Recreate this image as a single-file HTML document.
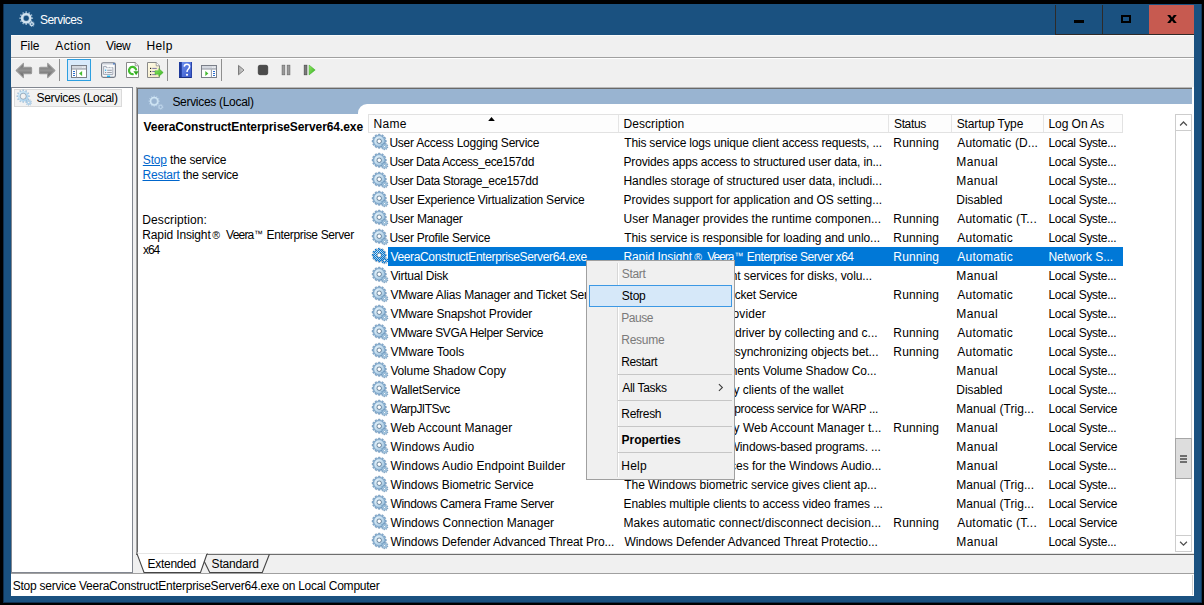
<!DOCTYPE html><html><head><meta charset="utf-8"><title>Services</title><style>
html,body{margin:0;padding:0;}
body{width:1204px;height:605px;background:#000;position:relative;overflow:hidden;font-family:"Liberation Sans", sans-serif;font-size:12px;color:#000;}
div,span,svg{position:absolute;box-sizing:border-box;}
.t{white-space:pre;line-height:16px;height:16px;}
.t span{position:static;}
.lnk{color:#0066cc;text-decoration:underline;}
.ico{overflow:visible;}
#win{left:3px;top:4px;width:1199px;height:599px;background:#1a5180;}
#client{left:11px;top:35px;width:1183px;height:561px;background:#f0f0f0;}
.vsep{width:1px;background:#a0a0a0;}
.hl{height:1px;}
.colsep{width:1px;background:#e5e5e5;top:115px;height:17px;}
.msep{left:618px;width:114px;height:1px;background:#c6c6c6;}
</style></head><body>
<svg width="0" height="0"><defs><linearGradient id="gg" x1="0" y1="0" x2="1" y2="1"><stop offset="0" stop-color="#e2f1fa"/><stop offset="1" stop-color="#a3c6e0"/></linearGradient><linearGradient id="gt" x1="0" y1="0" x2="1" y2="1"><stop offset="0" stop-color="#d3ecfa"/><stop offset="1" stop-color="#a9d0ec"/></linearGradient><pattern id="chk" width="2" height="2" patternUnits="userSpaceOnUse"><rect x="0" y="0" width="1" height="1" fill="#0078d7"/><rect x="1" y="1" width="1" height="1" fill="#0078d7"/></pattern></defs></svg>
<div id="win"></div>
<div id="edgeL" style="left:3px;top:4px;width:1px;height:599px;background:#0f3050"></div>
<div id="edgeR" style="left:1201px;top:4px;width:1px;height:599px;background:#113759"></div>
<div id="edgeB" style="left:3px;top:602px;width:1199px;height:1px;background:#0f3050"></div>
<!-- title bar buttons -->
<div style="left:1055px;top:5px;width:1px;height:30px;background:#2e2a28"></div>
<div style="left:1102px;top:5px;width:1px;height:30px;background:#2e2a28"></div>
<div style="left:1149px;top:5px;width:45px;height:29px;background:#c75a50"></div>
<div style="left:1055px;top:34px;width:139px;height:1px;background:#2e2a28"></div>
<div style="left:1074px;top:20px;width:10px;height:3px;background:#000"></div>
<div style="left:1121px;top:15px;width:10px;height:8px;border:2px solid #000"></div>
<svg style="left:1167px;top:15px" width="10" height="8" viewBox="0 0 10 8"><path d="M0.2 0H3.2L5 2.6 6.8 0H9.8L6.6 4 9.8 8H6.8L5 5.4 3.2 8H0.2L3.4 4Z" fill="#000"/></svg>
<!-- client -->
<div id="client"></div>
<div class="hl" style="left:11px;top:35px;width:1183px;background:#fafafa"></div>
<div class="hl" style="left:11px;top:57px;width:1183px;background:#a0a0a0"></div>
<div class="hl" style="left:11px;top:58px;width:1183px;background:#ffffff"></div>
<!-- toolbar -->
<svg id="tbsvg" style="left:11px;top:58px" width="320" height="29" viewBox="11 58 320 29">
<defs>
<linearGradient id="ga" x1="0" y1="0" x2="0" y2="1"><stop offset="0" stop-color="#6c6c6c"/><stop offset="0.5" stop-color="#939393"/><stop offset="1" stop-color="#5a5a5a"/></linearGradient>
<linearGradient id="gp" x1="0" y1="0" x2="1" y2="0"><stop offset="0" stop-color="#a4a4a4"/><stop offset="1" stop-color="#dcdcdc"/></linearGradient>
<linearGradient id="ggr" x1="0" y1="0" x2="1" y2="1"><stop offset="0" stop-color="#93e664"/><stop offset="1" stop-color="#33b021"/></linearGradient>
<linearGradient id="gh" x1="0" y1="0" x2="1" y2="1"><stop offset="0" stop-color="#7396f2"/><stop offset="1" stop-color="#3554c6"/></linearGradient>
<linearGradient id="gcream" x1="0" y1="0" x2="1" y2="1"><stop offset="0" stop-color="#fffbe8"/><stop offset="1" stop-color="#f3e9c0"/></linearGradient>
</defs>
<!-- back / forward -->
<path d="M16.2 70.5L23.4 63.4V67.2H30.6Q31.6 67.2 31.6 68.2V72.8Q31.6 73.8 30.6 73.8H23.4V77.6Z" fill="url(#ga)" stroke="#9a9a9a" stroke-width="1.1" stroke-linejoin="round"/>
<path d="M54.9 70.5L47.7 63.4V67.2H40.5Q39.5 67.2 39.5 68.2V72.8Q39.5 73.8 40.5 73.8H47.7V77.6Z" fill="url(#ga)" stroke="#9a9a9a" stroke-width="1.1" stroke-linejoin="round"/>
<rect x="59" y="59" width="1" height="22" fill="#8e8e8e"/>
<!-- selected button -->
<rect x="67.5" y="59.5" width="23" height="21" fill="#d9eafb" stroke="#2d9fe0" stroke-width="1"/>
<g>
<rect x="71.5" y="65.5" width="15" height="12" fill="#fff" stroke="#7b7f88" stroke-width="1"/>
<rect x="72" y="66" width="14" height="3" fill="#d4d8df"/>
<rect x="72" y="68.6" width="14" height="0.9" fill="#8a8f99"/>
<rect x="76" y="69.5" width="0.9" height="8" fill="#8a8f99"/>
<rect x="82.3" y="66.6" width="1.1" height="1.1" fill="#fff"/><rect x="84.2" y="66.6" width="1.1" height="1.1" fill="#fff"/>
<rect x="73" y="71" width="2" height="1" fill="#2b6fd0"/><rect x="73" y="73" width="2" height="1" fill="#2b6fd0"/><rect x="73" y="75" width="2" height="1" fill="#2b6fd0"/>
<path d="M82.1 70.9V76.1L79 73.5Z" fill="#46bb32"/>
</g>
<!-- properties -->
<g>
<rect x="101.6" y="62.8" width="13.8" height="14.6" rx="1.8" fill="#fff" stroke="#767c88" stroke-width="1.2"/>
<rect x="102.3" y="63.6" width="12.4" height="1.6" fill="#dfe3ea"/>
<rect x="113.2" y="63" width="1.6" height="1.6" fill="#4a78c0"/>
<path d="M103.6 66.4H106.2V67.4H112.9V74.6H103.6Z" fill="#eef1f6" stroke="#a3a9b6" stroke-width="1"/>
<rect x="107" y="66.4" width="2.2" height="1" fill="#fff"/><rect x="110" y="66.4" width="2.2" height="1" fill="#fff"/>
<rect x="105" y="69.6" width="1.2" height="1.2" fill="#19b4f0"/><rect x="107.2" y="69.8" width="4.6" height="0.9" fill="#8f949e"/>
<rect x="105" y="72" width="1.2" height="1.1" fill="#8f949e"/><rect x="107.2" y="72.1" width="4.6" height="0.9" fill="#8f949e"/>
<rect x="107" y="75.6" width="3.2" height="1.4" fill="#19b4f0"/><rect x="111" y="75.8" width="2.6" height="1" fill="#c8ccd4"/>
</g>
<!-- refresh -->
<g>
<path d="M126.5 62.5H135.2L138.5 65.8V77.5H126.5Z" fill="#fff" stroke="#8a8a8a" stroke-width="1"/>
<path d="M135.2 62.5V65.8H138.5" fill="#e8e8e8" stroke="#8a8a8a" stroke-width="0.8"/>
<path d="M136.2 70.4A3.6 3.6 0 1 0 133.6 74" fill="none" stroke="#43bd2e" stroke-width="2.2"/>
<path d="M133.4 71.2H138.6L136.2 75.2Z" fill="#2fa81c"/>
</g>
<!-- export -->
<g>
<path d="M147.5 62.5H156.2L159.5 65.8V77.5H147.5Z" fill="url(#gcream)" stroke="#8a8a8a" stroke-width="1"/>
<path d="M156.2 62.5V65.8H159.5" fill="#fff" stroke="#8a8a8a" stroke-width="0.8"/>
<rect x="150" y="67.8" width="1.2" height="1.2" fill="#222"/><rect x="152.2" y="67.9" width="4.6" height="1" fill="#7d78a8"/>
<rect x="150" y="70.9" width="1.2" height="1.2" fill="#222"/><rect x="152.2" y="71" width="3.4" height="1" fill="#7d78a8"/>
<rect x="150" y="74" width="1.2" height="1.2" fill="#222"/><rect x="152.2" y="74.1" width="4" height="1" fill="#7d78a8"/>
<path d="M155 70.8H158.8V68.6L163.2 72.5 158.8 76.4V74.2H155Z" fill="url(#ggr)" stroke="#3cae28" stroke-width="0.5"/>
</g>
<rect x="167" y="59" width="1" height="22" fill="#8e8e8e"/>
<!-- help -->
<g>
<rect x="179" y="62" width="13" height="16" fill="url(#gh)"/>
<rect x="179" y="62" width="2.8" height="16" fill="#1e3a9c"/>
<rect x="179" y="77" width="13" height="1" fill="#1a2f80"/>
<rect x="191" y="62" width="1" height="16" fill="#2a44a8"/>
<path d="M184.2 66.6Q184.4 64.2 186.9 64.2 189.6 64.2 189.6 66.6 189.6 68 188.2 69.2 187 70.2 187 72" fill="none" stroke="#fff" stroke-width="1.5"/>
<circle cx="187" cy="74.8" r="1.1" fill="#fff"/>
</g>
<!-- action pane -->
<g>
<rect x="201.5" y="65.5" width="15" height="12" fill="#fff" stroke="#7b7f88" stroke-width="1"/>
<rect x="202" y="66" width="14" height="3" fill="#d4d8df"/>
<rect x="202" y="68.6" width="14" height="0.9" fill="#8a8f99"/>
<rect x="210.9" y="69.5" width="0.9" height="8" fill="#8a8f99"/>
<rect x="212.3" y="66.6" width="1.1" height="1.1" fill="#fff"/><rect x="214.2" y="66.6" width="1.1" height="1.1" fill="#fff"/>
<rect x="213" y="71" width="2" height="1" fill="#2b6fd0"/><rect x="213" y="73" width="2" height="1" fill="#2b6fd0"/><rect x="213" y="75" width="2" height="1" fill="#2b6fd0"/>
<path d="M205.3 70.9V76.1L208.4 73.5Z" fill="#46bb32"/>
</g>
<rect x="221" y="59" width="1" height="22" fill="#8e8e8e"/>
<!-- play -->
<path d="M238.5 65.4L244 70.1 238.5 74.8Z" fill="url(#gp)" stroke="#7c7c7c" stroke-width="1" stroke-linejoin="round"/>
<!-- stop -->
<rect x="258.3" y="65.3" width="9.4" height="9.4" rx="1.6" fill="#4b4b4b" stroke="#3a3a3a" stroke-width="0.8"/>
<!-- pause -->
<rect x="282.1" y="65.2" width="2.7" height="9.6" fill="#9a9a9a" stroke="#6c6c6c" stroke-width="0.7"/>
<rect x="287.2" y="65.2" width="2.7" height="9.6" fill="#9a9a9a" stroke="#6c6c6c" stroke-width="0.7"/>
<!-- restart -->
<rect x="304.2" y="65.2" width="2.7" height="9.6" fill="#7a7a7a" stroke="#4c4c4c" stroke-width="0.7"/>
<path d="M309.1 65.1L315.2 70 309.1 74.9Z" fill="url(#ggr)" stroke="#38b024" stroke-width="0.5"/>
</svg>

<!-- tree pane -->
<div style="left:11px;top:87px;width:122px;height:486px;background:#fff;border:1px solid #828790;"></div>
<div style="left:14px;top:89px;width:108px;height:18px;background:#f2f2f2;border:1px solid #dadada"></div>
<!-- right pane -->
<div style="left:136px;top:87px;width:1058px;height:486px;background:#f0f0f0"></div>
<div style="left:136px;top:87px;width:1058px;height:468px;background:#fff;border-left:2px solid #696969;border-top:2px solid #696969;border-bottom:1px solid #6e6e6e"></div>
<div class="hl" style="left:136px;top:87px;width:1058px;background:#b9b9b9"></div>
<div style="left:136px;top:87px;width:1px;height:466px;background:#a0a0a0"></div>
<div style="left:136px;top:553px;width:2px;height:1px;background:#f0f0f0"></div>
<div style="left:1192px;top:87px;width:2px;height:467px;background:#fff"></div>
<div class="hl" style="left:138px;top:553px;width:1056px;background:#e3e3e3"></div>
<div style="left:138px;top:89px;width:1054px;height:25px;background:#99b4d1"></div>
<div style="left:358px;top:104px;width:836px;height:12px;background:#fff;border-top-left-radius:9px"></div>
<!-- list header -->
<div style="left:368px;top:114px;width:755px;height:19px;background:#fdfdfd;border:1px solid #e2e2e2;"></div>
<div class="colsep" style="left:618px"></div>
<div class="colsep" style="left:888px"></div>
<div class="colsep" style="left:951px"></div>
<div class="colsep" style="left:1043px"></div>
<svg style="left:488px;top:117px" width="7" height="4" viewBox="0 0 7 4"><path d="M0 4.2L3.5 0 7 4.2Z" fill="#000"/></svg>
<!-- selected row -->
<div style="left:388px;top:247px;width:735px;height:19px;background:#0078d7"></div>
<!-- scrollbar -->
<div style="left:1175px;top:114px;width:17px;height:438px;background:#fff;border-left:1px solid #cdcdcd;border-right:1px solid #cdcdcd"></div>
<div style="left:1175px;top:114px;width:17px;height:17px;border:1px solid #cdcdcd;background:#fff"></div>
<div style="left:1175px;top:535px;width:17px;height:17px;border:1px solid #cdcdcd;background:#fff"></div>
<svg style="left:1179px;top:120px" width="9" height="7" viewBox="0 0 9 7"><path d="M1.1 5.5L4.5 2 7.9 5.5" fill="none" stroke="#505050" stroke-width="1.25"/></svg>
<svg style="left:1179px;top:540px" width="9" height="7" viewBox="0 0 9 7"><path d="M1.1 1.7L4.5 5.2 7.9 1.7" fill="none" stroke="#505050" stroke-width="1.25"/></svg>
<div style="left:1175px;top:438px;width:17px;height:41px;background:#dddddd;border:1px solid #a6a6a6"></div>
<div style="left:1180px;top:455px;width:7px;height:2px;background:#6e6e6e"></div>
<div style="left:1180px;top:458px;width:7px;height:2px;background:#6e6e6e"></div>
<div style="left:1180px;top:461px;width:7px;height:2px;background:#6e6e6e"></div>
<!-- tabs -->
<svg style="left:130px;top:550px" width="150" height="25" viewBox="130 550 150 25">
<path d="M136.6 552.6L144 572.5H200.5L207.2 553.2" fill="#fff" stroke="#444" stroke-width="1.1"/>
<rect x="138" y="553" width="68.8" height="1" fill="#e6e6e6"/>
<path d="M204.3 561.5L209.7 572.5H262.3L269.4 554.3" fill="none" stroke="#444" stroke-width="1.1"/>
</svg>
<!-- status bar -->
<div class="hl" style="left:11px;top:573px;width:1183px;background:#a0a0a0"></div>
<div style="left:11px;top:574px;width:1183px;height:22px;background:#fff"></div>
<div style="left:1192px;top:575px;width:1px;height:20px;background:#d0d0d0"></div>

<div id="icons" style="left:0;top:0"><svg class="ico" style="left:371.8px;top:133.7px" width="16" height="16" viewBox="0 0 16 16"><path d="M13.00 6.11 L14.25 6.33 L14.25 8.07 L13.00 8.29 L12.77 9.15 L13.74 9.97 L12.87 11.48 L11.68 11.04 L11.04 11.68 L11.48 12.87 L9.97 13.74 L9.15 12.77 L8.29 13.00 L8.07 14.25 L6.33 14.25 L6.11 13.00 L5.25 12.77 L4.43 13.74 L2.92 12.87 L3.36 11.68 L2.72 11.04 L1.53 11.48 L0.66 9.97 L1.63 9.15 L1.40 8.29 L0.15 8.07 L0.15 6.33 L1.40 6.11 L1.63 5.25 L0.66 4.43 L1.53 2.92 L2.72 3.36 L3.36 2.72 L2.92 1.53 L4.43 0.66 L5.25 1.63 L6.11 1.40 L6.33 0.15 L8.07 0.15 L8.29 1.40 L9.15 1.63 L9.97 0.66 L11.48 1.53 L11.04 2.72 L11.68 3.36 L12.87 2.92 L13.74 4.43 L12.77 5.25 Z M9.50 7.20 A2.30 2.30 0 1 0 4.90 7.20 A2.30 2.30 0 1 0 9.50 7.20 Z" fill="#8db3d3" fill-opacity="1" fill-rule="evenodd" stroke="#4e7ba6" stroke-width="0.55" stroke-opacity="0.85"/><circle cx="7.2" cy="7.2" r="3.60" fill="none" stroke="url(#gg)" stroke-width="2.60"/><circle cx="7.2" cy="7.2" r="2.30" fill="none" stroke="#44596e" stroke-width="0.6" stroke-opacity="0.85"/><path d="M14.69 12.65 L15.96 13.02 L15.67 13.97 L14.41 13.56 L14.11 13.96 L14.84 15.06 L14.01 15.60 L13.30 14.48 L12.82 14.59 L12.67 15.90 L11.69 15.77 L11.87 14.47 L11.43 14.24 L10.47 15.15 L9.79 14.42 L10.77 13.54 L10.58 13.08 L9.26 13.16 L9.22 12.17 L10.53 12.12 L10.68 11.65 L9.62 10.86 L10.22 10.07 L11.26 10.88 L11.68 10.61 L11.37 9.33 L12.34 9.11 L12.61 10.40 L13.11 10.46 L13.70 9.28 L14.58 9.74 L13.96 10.90 L14.30 11.27 L15.51 10.74 L15.89 11.65 L14.67 12.15 Z M13.60 12.50 A1.00 1.00 0 1 0 11.60 12.50 A1.00 1.00 0 1 0 13.60 12.50 Z" fill="#8db3d3" fill-opacity="1" fill-rule="evenodd" stroke="#4e7ba6" stroke-width="0.45" stroke-opacity="0.85"/><circle cx="12.6" cy="12.5" r="1.65" fill="none" stroke="#a7c8e0" stroke-width="1.30"/></svg><svg class="ico" style="left:371.8px;top:152.7px" width="16" height="16" viewBox="0 0 16 16"><path d="M13.00 6.11 L14.25 6.33 L14.25 8.07 L13.00 8.29 L12.77 9.15 L13.74 9.97 L12.87 11.48 L11.68 11.04 L11.04 11.68 L11.48 12.87 L9.97 13.74 L9.15 12.77 L8.29 13.00 L8.07 14.25 L6.33 14.25 L6.11 13.00 L5.25 12.77 L4.43 13.74 L2.92 12.87 L3.36 11.68 L2.72 11.04 L1.53 11.48 L0.66 9.97 L1.63 9.15 L1.40 8.29 L0.15 8.07 L0.15 6.33 L1.40 6.11 L1.63 5.25 L0.66 4.43 L1.53 2.92 L2.72 3.36 L3.36 2.72 L2.92 1.53 L4.43 0.66 L5.25 1.63 L6.11 1.40 L6.33 0.15 L8.07 0.15 L8.29 1.40 L9.15 1.63 L9.97 0.66 L11.48 1.53 L11.04 2.72 L11.68 3.36 L12.87 2.92 L13.74 4.43 L12.77 5.25 Z M9.50 7.20 A2.30 2.30 0 1 0 4.90 7.20 A2.30 2.30 0 1 0 9.50 7.20 Z" fill="#8db3d3" fill-opacity="1" fill-rule="evenodd" stroke="#4e7ba6" stroke-width="0.55" stroke-opacity="0.85"/><circle cx="7.2" cy="7.2" r="3.60" fill="none" stroke="url(#gg)" stroke-width="2.60"/><circle cx="7.2" cy="7.2" r="2.30" fill="none" stroke="#44596e" stroke-width="0.6" stroke-opacity="0.85"/><path d="M14.69 12.65 L15.96 13.02 L15.67 13.97 L14.41 13.56 L14.11 13.96 L14.84 15.06 L14.01 15.60 L13.30 14.48 L12.82 14.59 L12.67 15.90 L11.69 15.77 L11.87 14.47 L11.43 14.24 L10.47 15.15 L9.79 14.42 L10.77 13.54 L10.58 13.08 L9.26 13.16 L9.22 12.17 L10.53 12.12 L10.68 11.65 L9.62 10.86 L10.22 10.07 L11.26 10.88 L11.68 10.61 L11.37 9.33 L12.34 9.11 L12.61 10.40 L13.11 10.46 L13.70 9.28 L14.58 9.74 L13.96 10.90 L14.30 11.27 L15.51 10.74 L15.89 11.65 L14.67 12.15 Z M13.60 12.50 A1.00 1.00 0 1 0 11.60 12.50 A1.00 1.00 0 1 0 13.60 12.50 Z" fill="#8db3d3" fill-opacity="1" fill-rule="evenodd" stroke="#4e7ba6" stroke-width="0.45" stroke-opacity="0.85"/><circle cx="12.6" cy="12.5" r="1.65" fill="none" stroke="#a7c8e0" stroke-width="1.30"/></svg><svg class="ico" style="left:371.8px;top:171.7px" width="16" height="16" viewBox="0 0 16 16"><path d="M13.00 6.11 L14.25 6.33 L14.25 8.07 L13.00 8.29 L12.77 9.15 L13.74 9.97 L12.87 11.48 L11.68 11.04 L11.04 11.68 L11.48 12.87 L9.97 13.74 L9.15 12.77 L8.29 13.00 L8.07 14.25 L6.33 14.25 L6.11 13.00 L5.25 12.77 L4.43 13.74 L2.92 12.87 L3.36 11.68 L2.72 11.04 L1.53 11.48 L0.66 9.97 L1.63 9.15 L1.40 8.29 L0.15 8.07 L0.15 6.33 L1.40 6.11 L1.63 5.25 L0.66 4.43 L1.53 2.92 L2.72 3.36 L3.36 2.72 L2.92 1.53 L4.43 0.66 L5.25 1.63 L6.11 1.40 L6.33 0.15 L8.07 0.15 L8.29 1.40 L9.15 1.63 L9.97 0.66 L11.48 1.53 L11.04 2.72 L11.68 3.36 L12.87 2.92 L13.74 4.43 L12.77 5.25 Z M9.50 7.20 A2.30 2.30 0 1 0 4.90 7.20 A2.30 2.30 0 1 0 9.50 7.20 Z" fill="#8db3d3" fill-opacity="1" fill-rule="evenodd" stroke="#4e7ba6" stroke-width="0.55" stroke-opacity="0.85"/><circle cx="7.2" cy="7.2" r="3.60" fill="none" stroke="url(#gg)" stroke-width="2.60"/><circle cx="7.2" cy="7.2" r="2.30" fill="none" stroke="#44596e" stroke-width="0.6" stroke-opacity="0.85"/><path d="M14.69 12.65 L15.96 13.02 L15.67 13.97 L14.41 13.56 L14.11 13.96 L14.84 15.06 L14.01 15.60 L13.30 14.48 L12.82 14.59 L12.67 15.90 L11.69 15.77 L11.87 14.47 L11.43 14.24 L10.47 15.15 L9.79 14.42 L10.77 13.54 L10.58 13.08 L9.26 13.16 L9.22 12.17 L10.53 12.12 L10.68 11.65 L9.62 10.86 L10.22 10.07 L11.26 10.88 L11.68 10.61 L11.37 9.33 L12.34 9.11 L12.61 10.40 L13.11 10.46 L13.70 9.28 L14.58 9.74 L13.96 10.90 L14.30 11.27 L15.51 10.74 L15.89 11.65 L14.67 12.15 Z M13.60 12.50 A1.00 1.00 0 1 0 11.60 12.50 A1.00 1.00 0 1 0 13.60 12.50 Z" fill="#8db3d3" fill-opacity="1" fill-rule="evenodd" stroke="#4e7ba6" stroke-width="0.45" stroke-opacity="0.85"/><circle cx="12.6" cy="12.5" r="1.65" fill="none" stroke="#a7c8e0" stroke-width="1.30"/></svg><svg class="ico" style="left:371.8px;top:190.7px" width="16" height="16" viewBox="0 0 16 16"><path d="M13.00 6.11 L14.25 6.33 L14.25 8.07 L13.00 8.29 L12.77 9.15 L13.74 9.97 L12.87 11.48 L11.68 11.04 L11.04 11.68 L11.48 12.87 L9.97 13.74 L9.15 12.77 L8.29 13.00 L8.07 14.25 L6.33 14.25 L6.11 13.00 L5.25 12.77 L4.43 13.74 L2.92 12.87 L3.36 11.68 L2.72 11.04 L1.53 11.48 L0.66 9.97 L1.63 9.15 L1.40 8.29 L0.15 8.07 L0.15 6.33 L1.40 6.11 L1.63 5.25 L0.66 4.43 L1.53 2.92 L2.72 3.36 L3.36 2.72 L2.92 1.53 L4.43 0.66 L5.25 1.63 L6.11 1.40 L6.33 0.15 L8.07 0.15 L8.29 1.40 L9.15 1.63 L9.97 0.66 L11.48 1.53 L11.04 2.72 L11.68 3.36 L12.87 2.92 L13.74 4.43 L12.77 5.25 Z M9.50 7.20 A2.30 2.30 0 1 0 4.90 7.20 A2.30 2.30 0 1 0 9.50 7.20 Z" fill="#8db3d3" fill-opacity="1" fill-rule="evenodd" stroke="#4e7ba6" stroke-width="0.55" stroke-opacity="0.85"/><circle cx="7.2" cy="7.2" r="3.60" fill="none" stroke="url(#gg)" stroke-width="2.60"/><circle cx="7.2" cy="7.2" r="2.30" fill="none" stroke="#44596e" stroke-width="0.6" stroke-opacity="0.85"/><path d="M14.69 12.65 L15.96 13.02 L15.67 13.97 L14.41 13.56 L14.11 13.96 L14.84 15.06 L14.01 15.60 L13.30 14.48 L12.82 14.59 L12.67 15.90 L11.69 15.77 L11.87 14.47 L11.43 14.24 L10.47 15.15 L9.79 14.42 L10.77 13.54 L10.58 13.08 L9.26 13.16 L9.22 12.17 L10.53 12.12 L10.68 11.65 L9.62 10.86 L10.22 10.07 L11.26 10.88 L11.68 10.61 L11.37 9.33 L12.34 9.11 L12.61 10.40 L13.11 10.46 L13.70 9.28 L14.58 9.74 L13.96 10.90 L14.30 11.27 L15.51 10.74 L15.89 11.65 L14.67 12.15 Z M13.60 12.50 A1.00 1.00 0 1 0 11.60 12.50 A1.00 1.00 0 1 0 13.60 12.50 Z" fill="#8db3d3" fill-opacity="1" fill-rule="evenodd" stroke="#4e7ba6" stroke-width="0.45" stroke-opacity="0.85"/><circle cx="12.6" cy="12.5" r="1.65" fill="none" stroke="#a7c8e0" stroke-width="1.30"/></svg><svg class="ico" style="left:371.8px;top:209.7px" width="16" height="16" viewBox="0 0 16 16"><path d="M13.00 6.11 L14.25 6.33 L14.25 8.07 L13.00 8.29 L12.77 9.15 L13.74 9.97 L12.87 11.48 L11.68 11.04 L11.04 11.68 L11.48 12.87 L9.97 13.74 L9.15 12.77 L8.29 13.00 L8.07 14.25 L6.33 14.25 L6.11 13.00 L5.25 12.77 L4.43 13.74 L2.92 12.87 L3.36 11.68 L2.72 11.04 L1.53 11.48 L0.66 9.97 L1.63 9.15 L1.40 8.29 L0.15 8.07 L0.15 6.33 L1.40 6.11 L1.63 5.25 L0.66 4.43 L1.53 2.92 L2.72 3.36 L3.36 2.72 L2.92 1.53 L4.43 0.66 L5.25 1.63 L6.11 1.40 L6.33 0.15 L8.07 0.15 L8.29 1.40 L9.15 1.63 L9.97 0.66 L11.48 1.53 L11.04 2.72 L11.68 3.36 L12.87 2.92 L13.74 4.43 L12.77 5.25 Z M9.50 7.20 A2.30 2.30 0 1 0 4.90 7.20 A2.30 2.30 0 1 0 9.50 7.20 Z" fill="#8db3d3" fill-opacity="1" fill-rule="evenodd" stroke="#4e7ba6" stroke-width="0.55" stroke-opacity="0.85"/><circle cx="7.2" cy="7.2" r="3.60" fill="none" stroke="url(#gg)" stroke-width="2.60"/><circle cx="7.2" cy="7.2" r="2.30" fill="none" stroke="#44596e" stroke-width="0.6" stroke-opacity="0.85"/><path d="M14.69 12.65 L15.96 13.02 L15.67 13.97 L14.41 13.56 L14.11 13.96 L14.84 15.06 L14.01 15.60 L13.30 14.48 L12.82 14.59 L12.67 15.90 L11.69 15.77 L11.87 14.47 L11.43 14.24 L10.47 15.15 L9.79 14.42 L10.77 13.54 L10.58 13.08 L9.26 13.16 L9.22 12.17 L10.53 12.12 L10.68 11.65 L9.62 10.86 L10.22 10.07 L11.26 10.88 L11.68 10.61 L11.37 9.33 L12.34 9.11 L12.61 10.40 L13.11 10.46 L13.70 9.28 L14.58 9.74 L13.96 10.90 L14.30 11.27 L15.51 10.74 L15.89 11.65 L14.67 12.15 Z M13.60 12.50 A1.00 1.00 0 1 0 11.60 12.50 A1.00 1.00 0 1 0 13.60 12.50 Z" fill="#8db3d3" fill-opacity="1" fill-rule="evenodd" stroke="#4e7ba6" stroke-width="0.45" stroke-opacity="0.85"/><circle cx="12.6" cy="12.5" r="1.65" fill="none" stroke="#a7c8e0" stroke-width="1.30"/></svg><svg class="ico" style="left:371.8px;top:228.7px" width="16" height="16" viewBox="0 0 16 16"><path d="M13.00 6.11 L14.25 6.33 L14.25 8.07 L13.00 8.29 L12.77 9.15 L13.74 9.97 L12.87 11.48 L11.68 11.04 L11.04 11.68 L11.48 12.87 L9.97 13.74 L9.15 12.77 L8.29 13.00 L8.07 14.25 L6.33 14.25 L6.11 13.00 L5.25 12.77 L4.43 13.74 L2.92 12.87 L3.36 11.68 L2.72 11.04 L1.53 11.48 L0.66 9.97 L1.63 9.15 L1.40 8.29 L0.15 8.07 L0.15 6.33 L1.40 6.11 L1.63 5.25 L0.66 4.43 L1.53 2.92 L2.72 3.36 L3.36 2.72 L2.92 1.53 L4.43 0.66 L5.25 1.63 L6.11 1.40 L6.33 0.15 L8.07 0.15 L8.29 1.40 L9.15 1.63 L9.97 0.66 L11.48 1.53 L11.04 2.72 L11.68 3.36 L12.87 2.92 L13.74 4.43 L12.77 5.25 Z M9.50 7.20 A2.30 2.30 0 1 0 4.90 7.20 A2.30 2.30 0 1 0 9.50 7.20 Z" fill="#8db3d3" fill-opacity="1" fill-rule="evenodd" stroke="#4e7ba6" stroke-width="0.55" stroke-opacity="0.85"/><circle cx="7.2" cy="7.2" r="3.60" fill="none" stroke="url(#gg)" stroke-width="2.60"/><circle cx="7.2" cy="7.2" r="2.30" fill="none" stroke="#44596e" stroke-width="0.6" stroke-opacity="0.85"/><path d="M14.69 12.65 L15.96 13.02 L15.67 13.97 L14.41 13.56 L14.11 13.96 L14.84 15.06 L14.01 15.60 L13.30 14.48 L12.82 14.59 L12.67 15.90 L11.69 15.77 L11.87 14.47 L11.43 14.24 L10.47 15.15 L9.79 14.42 L10.77 13.54 L10.58 13.08 L9.26 13.16 L9.22 12.17 L10.53 12.12 L10.68 11.65 L9.62 10.86 L10.22 10.07 L11.26 10.88 L11.68 10.61 L11.37 9.33 L12.34 9.11 L12.61 10.40 L13.11 10.46 L13.70 9.28 L14.58 9.74 L13.96 10.90 L14.30 11.27 L15.51 10.74 L15.89 11.65 L14.67 12.15 Z M13.60 12.50 A1.00 1.00 0 1 0 11.60 12.50 A1.00 1.00 0 1 0 13.60 12.50 Z" fill="#8db3d3" fill-opacity="1" fill-rule="evenodd" stroke="#4e7ba6" stroke-width="0.45" stroke-opacity="0.85"/><circle cx="12.6" cy="12.5" r="1.65" fill="none" stroke="#a7c8e0" stroke-width="1.30"/></svg><svg class="ico" style="left:372px;top:248px" width="16" height="16" viewBox="0 0 16 16"><path d="M13.00 6.11 L14.25 6.33 L14.25 8.07 L13.00 8.29 L12.77 9.15 L13.74 9.97 L12.87 11.48 L11.68 11.04 L11.04 11.68 L11.48 12.87 L9.97 13.74 L9.15 12.77 L8.29 13.00 L8.07 14.25 L6.33 14.25 L6.11 13.00 L5.25 12.77 L4.43 13.74 L2.92 12.87 L3.36 11.68 L2.72 11.04 L1.53 11.48 L0.66 9.97 L1.63 9.15 L1.40 8.29 L0.15 8.07 L0.15 6.33 L1.40 6.11 L1.63 5.25 L0.66 4.43 L1.53 2.92 L2.72 3.36 L3.36 2.72 L2.92 1.53 L4.43 0.66 L5.25 1.63 L6.11 1.40 L6.33 0.15 L8.07 0.15 L8.29 1.40 L9.15 1.63 L9.97 0.66 L11.48 1.53 L11.04 2.72 L11.68 3.36 L12.87 2.92 L13.74 4.43 L12.77 5.25 Z M9.50 7.20 A2.30 2.30 0 1 0 4.90 7.20 A2.30 2.30 0 1 0 9.50 7.20 Z" fill="#8db3d3" fill-opacity="1" fill-rule="evenodd" stroke="#4e7ba6" stroke-width="0.55" stroke-opacity="0.85"/><circle cx="7.2" cy="7.2" r="3.60" fill="none" stroke="url(#gg)" stroke-width="2.60"/><circle cx="7.2" cy="7.2" r="2.30" fill="none" stroke="#44596e" stroke-width="0.6" stroke-opacity="0.85"/><path d="M14.69 12.65 L15.96 13.02 L15.67 13.97 L14.41 13.56 L14.11 13.96 L14.84 15.06 L14.01 15.60 L13.30 14.48 L12.82 14.59 L12.67 15.90 L11.69 15.77 L11.87 14.47 L11.43 14.24 L10.47 15.15 L9.79 14.42 L10.77 13.54 L10.58 13.08 L9.26 13.16 L9.22 12.17 L10.53 12.12 L10.68 11.65 L9.62 10.86 L10.22 10.07 L11.26 10.88 L11.68 10.61 L11.37 9.33 L12.34 9.11 L12.61 10.40 L13.11 10.46 L13.70 9.28 L14.58 9.74 L13.96 10.90 L14.30 11.27 L15.51 10.74 L15.89 11.65 L14.67 12.15 Z M13.60 12.50 A1.00 1.00 0 1 0 11.60 12.50 A1.00 1.00 0 1 0 13.60 12.50 Z" fill="#8db3d3" fill-opacity="1" fill-rule="evenodd" stroke="#4e7ba6" stroke-width="0.45" stroke-opacity="0.85"/><circle cx="12.6" cy="12.5" r="1.65" fill="none" stroke="#a7c8e0" stroke-width="1.30"/><g shape-rendering="crispEdges"><path d="M13.00 6.11 L14.25 6.33 L14.25 8.07 L13.00 8.29 L12.77 9.15 L13.74 9.97 L12.87 11.48 L11.68 11.04 L11.04 11.68 L11.48 12.87 L9.97 13.74 L9.15 12.77 L8.29 13.00 L8.07 14.25 L6.33 14.25 L6.11 13.00 L5.25 12.77 L4.43 13.74 L2.92 12.87 L3.36 11.68 L2.72 11.04 L1.53 11.48 L0.66 9.97 L1.63 9.15 L1.40 8.29 L0.15 8.07 L0.15 6.33 L1.40 6.11 L1.63 5.25 L0.66 4.43 L1.53 2.92 L2.72 3.36 L3.36 2.72 L2.92 1.53 L4.43 0.66 L5.25 1.63 L6.11 1.40 L6.33 0.15 L8.07 0.15 L8.29 1.40 L9.15 1.63 L9.97 0.66 L11.48 1.53 L11.04 2.72 L11.68 3.36 L12.87 2.92 L13.74 4.43 L12.77 5.25 Z M9.50 7.20 A2.30 2.30 0 1 0 4.90 7.20 A2.30 2.30 0 1 0 9.50 7.20 Z" fill="url(#chk)" fill-rule="evenodd"/><path d="M14.69 12.65 L15.96 13.02 L15.67 13.97 L14.41 13.56 L14.11 13.96 L14.84 15.06 L14.01 15.60 L13.30 14.48 L12.82 14.59 L12.67 15.90 L11.69 15.77 L11.87 14.47 L11.43 14.24 L10.47 15.15 L9.79 14.42 L10.77 13.54 L10.58 13.08 L9.26 13.16 L9.22 12.17 L10.53 12.12 L10.68 11.65 L9.62 10.86 L10.22 10.07 L11.26 10.88 L11.68 10.61 L11.37 9.33 L12.34 9.11 L12.61 10.40 L13.11 10.46 L13.70 9.28 L14.58 9.74 L13.96 10.90 L14.30 11.27 L15.51 10.74 L15.89 11.65 L14.67 12.15 Z M13.60 12.50 A1.00 1.00 0 1 0 11.60 12.50 A1.00 1.00 0 1 0 13.60 12.50 Z" fill="url(#chk)" fill-rule="evenodd"/></g></svg><svg class="ico" style="left:371.8px;top:266.7px" width="16" height="16" viewBox="0 0 16 16"><path d="M13.00 6.11 L14.25 6.33 L14.25 8.07 L13.00 8.29 L12.77 9.15 L13.74 9.97 L12.87 11.48 L11.68 11.04 L11.04 11.68 L11.48 12.87 L9.97 13.74 L9.15 12.77 L8.29 13.00 L8.07 14.25 L6.33 14.25 L6.11 13.00 L5.25 12.77 L4.43 13.74 L2.92 12.87 L3.36 11.68 L2.72 11.04 L1.53 11.48 L0.66 9.97 L1.63 9.15 L1.40 8.29 L0.15 8.07 L0.15 6.33 L1.40 6.11 L1.63 5.25 L0.66 4.43 L1.53 2.92 L2.72 3.36 L3.36 2.72 L2.92 1.53 L4.43 0.66 L5.25 1.63 L6.11 1.40 L6.33 0.15 L8.07 0.15 L8.29 1.40 L9.15 1.63 L9.97 0.66 L11.48 1.53 L11.04 2.72 L11.68 3.36 L12.87 2.92 L13.74 4.43 L12.77 5.25 Z M9.50 7.20 A2.30 2.30 0 1 0 4.90 7.20 A2.30 2.30 0 1 0 9.50 7.20 Z" fill="#8db3d3" fill-opacity="1" fill-rule="evenodd" stroke="#4e7ba6" stroke-width="0.55" stroke-opacity="0.85"/><circle cx="7.2" cy="7.2" r="3.60" fill="none" stroke="url(#gg)" stroke-width="2.60"/><circle cx="7.2" cy="7.2" r="2.30" fill="none" stroke="#44596e" stroke-width="0.6" stroke-opacity="0.85"/><path d="M14.69 12.65 L15.96 13.02 L15.67 13.97 L14.41 13.56 L14.11 13.96 L14.84 15.06 L14.01 15.60 L13.30 14.48 L12.82 14.59 L12.67 15.90 L11.69 15.77 L11.87 14.47 L11.43 14.24 L10.47 15.15 L9.79 14.42 L10.77 13.54 L10.58 13.08 L9.26 13.16 L9.22 12.17 L10.53 12.12 L10.68 11.65 L9.62 10.86 L10.22 10.07 L11.26 10.88 L11.68 10.61 L11.37 9.33 L12.34 9.11 L12.61 10.40 L13.11 10.46 L13.70 9.28 L14.58 9.74 L13.96 10.90 L14.30 11.27 L15.51 10.74 L15.89 11.65 L14.67 12.15 Z M13.60 12.50 A1.00 1.00 0 1 0 11.60 12.50 A1.00 1.00 0 1 0 13.60 12.50 Z" fill="#8db3d3" fill-opacity="1" fill-rule="evenodd" stroke="#4e7ba6" stroke-width="0.45" stroke-opacity="0.85"/><circle cx="12.6" cy="12.5" r="1.65" fill="none" stroke="#a7c8e0" stroke-width="1.30"/></svg><svg class="ico" style="left:371.8px;top:285.7px" width="16" height="16" viewBox="0 0 16 16"><path d="M13.00 6.11 L14.25 6.33 L14.25 8.07 L13.00 8.29 L12.77 9.15 L13.74 9.97 L12.87 11.48 L11.68 11.04 L11.04 11.68 L11.48 12.87 L9.97 13.74 L9.15 12.77 L8.29 13.00 L8.07 14.25 L6.33 14.25 L6.11 13.00 L5.25 12.77 L4.43 13.74 L2.92 12.87 L3.36 11.68 L2.72 11.04 L1.53 11.48 L0.66 9.97 L1.63 9.15 L1.40 8.29 L0.15 8.07 L0.15 6.33 L1.40 6.11 L1.63 5.25 L0.66 4.43 L1.53 2.92 L2.72 3.36 L3.36 2.72 L2.92 1.53 L4.43 0.66 L5.25 1.63 L6.11 1.40 L6.33 0.15 L8.07 0.15 L8.29 1.40 L9.15 1.63 L9.97 0.66 L11.48 1.53 L11.04 2.72 L11.68 3.36 L12.87 2.92 L13.74 4.43 L12.77 5.25 Z M9.50 7.20 A2.30 2.30 0 1 0 4.90 7.20 A2.30 2.30 0 1 0 9.50 7.20 Z" fill="#8db3d3" fill-opacity="1" fill-rule="evenodd" stroke="#4e7ba6" stroke-width="0.55" stroke-opacity="0.85"/><circle cx="7.2" cy="7.2" r="3.60" fill="none" stroke="url(#gg)" stroke-width="2.60"/><circle cx="7.2" cy="7.2" r="2.30" fill="none" stroke="#44596e" stroke-width="0.6" stroke-opacity="0.85"/><path d="M14.69 12.65 L15.96 13.02 L15.67 13.97 L14.41 13.56 L14.11 13.96 L14.84 15.06 L14.01 15.60 L13.30 14.48 L12.82 14.59 L12.67 15.90 L11.69 15.77 L11.87 14.47 L11.43 14.24 L10.47 15.15 L9.79 14.42 L10.77 13.54 L10.58 13.08 L9.26 13.16 L9.22 12.17 L10.53 12.12 L10.68 11.65 L9.62 10.86 L10.22 10.07 L11.26 10.88 L11.68 10.61 L11.37 9.33 L12.34 9.11 L12.61 10.40 L13.11 10.46 L13.70 9.28 L14.58 9.74 L13.96 10.90 L14.30 11.27 L15.51 10.74 L15.89 11.65 L14.67 12.15 Z M13.60 12.50 A1.00 1.00 0 1 0 11.60 12.50 A1.00 1.00 0 1 0 13.60 12.50 Z" fill="#8db3d3" fill-opacity="1" fill-rule="evenodd" stroke="#4e7ba6" stroke-width="0.45" stroke-opacity="0.85"/><circle cx="12.6" cy="12.5" r="1.65" fill="none" stroke="#a7c8e0" stroke-width="1.30"/></svg><svg class="ico" style="left:371.8px;top:304.7px" width="16" height="16" viewBox="0 0 16 16"><path d="M13.00 6.11 L14.25 6.33 L14.25 8.07 L13.00 8.29 L12.77 9.15 L13.74 9.97 L12.87 11.48 L11.68 11.04 L11.04 11.68 L11.48 12.87 L9.97 13.74 L9.15 12.77 L8.29 13.00 L8.07 14.25 L6.33 14.25 L6.11 13.00 L5.25 12.77 L4.43 13.74 L2.92 12.87 L3.36 11.68 L2.72 11.04 L1.53 11.48 L0.66 9.97 L1.63 9.15 L1.40 8.29 L0.15 8.07 L0.15 6.33 L1.40 6.11 L1.63 5.25 L0.66 4.43 L1.53 2.92 L2.72 3.36 L3.36 2.72 L2.92 1.53 L4.43 0.66 L5.25 1.63 L6.11 1.40 L6.33 0.15 L8.07 0.15 L8.29 1.40 L9.15 1.63 L9.97 0.66 L11.48 1.53 L11.04 2.72 L11.68 3.36 L12.87 2.92 L13.74 4.43 L12.77 5.25 Z M9.50 7.20 A2.30 2.30 0 1 0 4.90 7.20 A2.30 2.30 0 1 0 9.50 7.20 Z" fill="#8db3d3" fill-opacity="1" fill-rule="evenodd" stroke="#4e7ba6" stroke-width="0.55" stroke-opacity="0.85"/><circle cx="7.2" cy="7.2" r="3.60" fill="none" stroke="url(#gg)" stroke-width="2.60"/><circle cx="7.2" cy="7.2" r="2.30" fill="none" stroke="#44596e" stroke-width="0.6" stroke-opacity="0.85"/><path d="M14.69 12.65 L15.96 13.02 L15.67 13.97 L14.41 13.56 L14.11 13.96 L14.84 15.06 L14.01 15.60 L13.30 14.48 L12.82 14.59 L12.67 15.90 L11.69 15.77 L11.87 14.47 L11.43 14.24 L10.47 15.15 L9.79 14.42 L10.77 13.54 L10.58 13.08 L9.26 13.16 L9.22 12.17 L10.53 12.12 L10.68 11.65 L9.62 10.86 L10.22 10.07 L11.26 10.88 L11.68 10.61 L11.37 9.33 L12.34 9.11 L12.61 10.40 L13.11 10.46 L13.70 9.28 L14.58 9.74 L13.96 10.90 L14.30 11.27 L15.51 10.74 L15.89 11.65 L14.67 12.15 Z M13.60 12.50 A1.00 1.00 0 1 0 11.60 12.50 A1.00 1.00 0 1 0 13.60 12.50 Z" fill="#8db3d3" fill-opacity="1" fill-rule="evenodd" stroke="#4e7ba6" stroke-width="0.45" stroke-opacity="0.85"/><circle cx="12.6" cy="12.5" r="1.65" fill="none" stroke="#a7c8e0" stroke-width="1.30"/></svg><svg class="ico" style="left:371.8px;top:323.7px" width="16" height="16" viewBox="0 0 16 16"><path d="M13.00 6.11 L14.25 6.33 L14.25 8.07 L13.00 8.29 L12.77 9.15 L13.74 9.97 L12.87 11.48 L11.68 11.04 L11.04 11.68 L11.48 12.87 L9.97 13.74 L9.15 12.77 L8.29 13.00 L8.07 14.25 L6.33 14.25 L6.11 13.00 L5.25 12.77 L4.43 13.74 L2.92 12.87 L3.36 11.68 L2.72 11.04 L1.53 11.48 L0.66 9.97 L1.63 9.15 L1.40 8.29 L0.15 8.07 L0.15 6.33 L1.40 6.11 L1.63 5.25 L0.66 4.43 L1.53 2.92 L2.72 3.36 L3.36 2.72 L2.92 1.53 L4.43 0.66 L5.25 1.63 L6.11 1.40 L6.33 0.15 L8.07 0.15 L8.29 1.40 L9.15 1.63 L9.97 0.66 L11.48 1.53 L11.04 2.72 L11.68 3.36 L12.87 2.92 L13.74 4.43 L12.77 5.25 Z M9.50 7.20 A2.30 2.30 0 1 0 4.90 7.20 A2.30 2.30 0 1 0 9.50 7.20 Z" fill="#8db3d3" fill-opacity="1" fill-rule="evenodd" stroke="#4e7ba6" stroke-width="0.55" stroke-opacity="0.85"/><circle cx="7.2" cy="7.2" r="3.60" fill="none" stroke="url(#gg)" stroke-width="2.60"/><circle cx="7.2" cy="7.2" r="2.30" fill="none" stroke="#44596e" stroke-width="0.6" stroke-opacity="0.85"/><path d="M14.69 12.65 L15.96 13.02 L15.67 13.97 L14.41 13.56 L14.11 13.96 L14.84 15.06 L14.01 15.60 L13.30 14.48 L12.82 14.59 L12.67 15.90 L11.69 15.77 L11.87 14.47 L11.43 14.24 L10.47 15.15 L9.79 14.42 L10.77 13.54 L10.58 13.08 L9.26 13.16 L9.22 12.17 L10.53 12.12 L10.68 11.65 L9.62 10.86 L10.22 10.07 L11.26 10.88 L11.68 10.61 L11.37 9.33 L12.34 9.11 L12.61 10.40 L13.11 10.46 L13.70 9.28 L14.58 9.74 L13.96 10.90 L14.30 11.27 L15.51 10.74 L15.89 11.65 L14.67 12.15 Z M13.60 12.50 A1.00 1.00 0 1 0 11.60 12.50 A1.00 1.00 0 1 0 13.60 12.50 Z" fill="#8db3d3" fill-opacity="1" fill-rule="evenodd" stroke="#4e7ba6" stroke-width="0.45" stroke-opacity="0.85"/><circle cx="12.6" cy="12.5" r="1.65" fill="none" stroke="#a7c8e0" stroke-width="1.30"/></svg><svg class="ico" style="left:371.8px;top:342.7px" width="16" height="16" viewBox="0 0 16 16"><path d="M13.00 6.11 L14.25 6.33 L14.25 8.07 L13.00 8.29 L12.77 9.15 L13.74 9.97 L12.87 11.48 L11.68 11.04 L11.04 11.68 L11.48 12.87 L9.97 13.74 L9.15 12.77 L8.29 13.00 L8.07 14.25 L6.33 14.25 L6.11 13.00 L5.25 12.77 L4.43 13.74 L2.92 12.87 L3.36 11.68 L2.72 11.04 L1.53 11.48 L0.66 9.97 L1.63 9.15 L1.40 8.29 L0.15 8.07 L0.15 6.33 L1.40 6.11 L1.63 5.25 L0.66 4.43 L1.53 2.92 L2.72 3.36 L3.36 2.72 L2.92 1.53 L4.43 0.66 L5.25 1.63 L6.11 1.40 L6.33 0.15 L8.07 0.15 L8.29 1.40 L9.15 1.63 L9.97 0.66 L11.48 1.53 L11.04 2.72 L11.68 3.36 L12.87 2.92 L13.74 4.43 L12.77 5.25 Z M9.50 7.20 A2.30 2.30 0 1 0 4.90 7.20 A2.30 2.30 0 1 0 9.50 7.20 Z" fill="#8db3d3" fill-opacity="1" fill-rule="evenodd" stroke="#4e7ba6" stroke-width="0.55" stroke-opacity="0.85"/><circle cx="7.2" cy="7.2" r="3.60" fill="none" stroke="url(#gg)" stroke-width="2.60"/><circle cx="7.2" cy="7.2" r="2.30" fill="none" stroke="#44596e" stroke-width="0.6" stroke-opacity="0.85"/><path d="M14.69 12.65 L15.96 13.02 L15.67 13.97 L14.41 13.56 L14.11 13.96 L14.84 15.06 L14.01 15.60 L13.30 14.48 L12.82 14.59 L12.67 15.90 L11.69 15.77 L11.87 14.47 L11.43 14.24 L10.47 15.15 L9.79 14.42 L10.77 13.54 L10.58 13.08 L9.26 13.16 L9.22 12.17 L10.53 12.12 L10.68 11.65 L9.62 10.86 L10.22 10.07 L11.26 10.88 L11.68 10.61 L11.37 9.33 L12.34 9.11 L12.61 10.40 L13.11 10.46 L13.70 9.28 L14.58 9.74 L13.96 10.90 L14.30 11.27 L15.51 10.74 L15.89 11.65 L14.67 12.15 Z M13.60 12.50 A1.00 1.00 0 1 0 11.60 12.50 A1.00 1.00 0 1 0 13.60 12.50 Z" fill="#8db3d3" fill-opacity="1" fill-rule="evenodd" stroke="#4e7ba6" stroke-width="0.45" stroke-opacity="0.85"/><circle cx="12.6" cy="12.5" r="1.65" fill="none" stroke="#a7c8e0" stroke-width="1.30"/></svg><svg class="ico" style="left:371.8px;top:361.7px" width="16" height="16" viewBox="0 0 16 16"><path d="M13.00 6.11 L14.25 6.33 L14.25 8.07 L13.00 8.29 L12.77 9.15 L13.74 9.97 L12.87 11.48 L11.68 11.04 L11.04 11.68 L11.48 12.87 L9.97 13.74 L9.15 12.77 L8.29 13.00 L8.07 14.25 L6.33 14.25 L6.11 13.00 L5.25 12.77 L4.43 13.74 L2.92 12.87 L3.36 11.68 L2.72 11.04 L1.53 11.48 L0.66 9.97 L1.63 9.15 L1.40 8.29 L0.15 8.07 L0.15 6.33 L1.40 6.11 L1.63 5.25 L0.66 4.43 L1.53 2.92 L2.72 3.36 L3.36 2.72 L2.92 1.53 L4.43 0.66 L5.25 1.63 L6.11 1.40 L6.33 0.15 L8.07 0.15 L8.29 1.40 L9.15 1.63 L9.97 0.66 L11.48 1.53 L11.04 2.72 L11.68 3.36 L12.87 2.92 L13.74 4.43 L12.77 5.25 Z M9.50 7.20 A2.30 2.30 0 1 0 4.90 7.20 A2.30 2.30 0 1 0 9.50 7.20 Z" fill="#8db3d3" fill-opacity="1" fill-rule="evenodd" stroke="#4e7ba6" stroke-width="0.55" stroke-opacity="0.85"/><circle cx="7.2" cy="7.2" r="3.60" fill="none" stroke="url(#gg)" stroke-width="2.60"/><circle cx="7.2" cy="7.2" r="2.30" fill="none" stroke="#44596e" stroke-width="0.6" stroke-opacity="0.85"/><path d="M14.69 12.65 L15.96 13.02 L15.67 13.97 L14.41 13.56 L14.11 13.96 L14.84 15.06 L14.01 15.60 L13.30 14.48 L12.82 14.59 L12.67 15.90 L11.69 15.77 L11.87 14.47 L11.43 14.24 L10.47 15.15 L9.79 14.42 L10.77 13.54 L10.58 13.08 L9.26 13.16 L9.22 12.17 L10.53 12.12 L10.68 11.65 L9.62 10.86 L10.22 10.07 L11.26 10.88 L11.68 10.61 L11.37 9.33 L12.34 9.11 L12.61 10.40 L13.11 10.46 L13.70 9.28 L14.58 9.74 L13.96 10.90 L14.30 11.27 L15.51 10.74 L15.89 11.65 L14.67 12.15 Z M13.60 12.50 A1.00 1.00 0 1 0 11.60 12.50 A1.00 1.00 0 1 0 13.60 12.50 Z" fill="#8db3d3" fill-opacity="1" fill-rule="evenodd" stroke="#4e7ba6" stroke-width="0.45" stroke-opacity="0.85"/><circle cx="12.6" cy="12.5" r="1.65" fill="none" stroke="#a7c8e0" stroke-width="1.30"/></svg><svg class="ico" style="left:371.8px;top:380.7px" width="16" height="16" viewBox="0 0 16 16"><path d="M13.00 6.11 L14.25 6.33 L14.25 8.07 L13.00 8.29 L12.77 9.15 L13.74 9.97 L12.87 11.48 L11.68 11.04 L11.04 11.68 L11.48 12.87 L9.97 13.74 L9.15 12.77 L8.29 13.00 L8.07 14.25 L6.33 14.25 L6.11 13.00 L5.25 12.77 L4.43 13.74 L2.92 12.87 L3.36 11.68 L2.72 11.04 L1.53 11.48 L0.66 9.97 L1.63 9.15 L1.40 8.29 L0.15 8.07 L0.15 6.33 L1.40 6.11 L1.63 5.25 L0.66 4.43 L1.53 2.92 L2.72 3.36 L3.36 2.72 L2.92 1.53 L4.43 0.66 L5.25 1.63 L6.11 1.40 L6.33 0.15 L8.07 0.15 L8.29 1.40 L9.15 1.63 L9.97 0.66 L11.48 1.53 L11.04 2.72 L11.68 3.36 L12.87 2.92 L13.74 4.43 L12.77 5.25 Z M9.50 7.20 A2.30 2.30 0 1 0 4.90 7.20 A2.30 2.30 0 1 0 9.50 7.20 Z" fill="#8db3d3" fill-opacity="1" fill-rule="evenodd" stroke="#4e7ba6" stroke-width="0.55" stroke-opacity="0.85"/><circle cx="7.2" cy="7.2" r="3.60" fill="none" stroke="url(#gg)" stroke-width="2.60"/><circle cx="7.2" cy="7.2" r="2.30" fill="none" stroke="#44596e" stroke-width="0.6" stroke-opacity="0.85"/><path d="M14.69 12.65 L15.96 13.02 L15.67 13.97 L14.41 13.56 L14.11 13.96 L14.84 15.06 L14.01 15.60 L13.30 14.48 L12.82 14.59 L12.67 15.90 L11.69 15.77 L11.87 14.47 L11.43 14.24 L10.47 15.15 L9.79 14.42 L10.77 13.54 L10.58 13.08 L9.26 13.16 L9.22 12.17 L10.53 12.12 L10.68 11.65 L9.62 10.86 L10.22 10.07 L11.26 10.88 L11.68 10.61 L11.37 9.33 L12.34 9.11 L12.61 10.40 L13.11 10.46 L13.70 9.28 L14.58 9.74 L13.96 10.90 L14.30 11.27 L15.51 10.74 L15.89 11.65 L14.67 12.15 Z M13.60 12.50 A1.00 1.00 0 1 0 11.60 12.50 A1.00 1.00 0 1 0 13.60 12.50 Z" fill="#8db3d3" fill-opacity="1" fill-rule="evenodd" stroke="#4e7ba6" stroke-width="0.45" stroke-opacity="0.85"/><circle cx="12.6" cy="12.5" r="1.65" fill="none" stroke="#a7c8e0" stroke-width="1.30"/></svg><svg class="ico" style="left:371.8px;top:399.7px" width="16" height="16" viewBox="0 0 16 16"><path d="M13.00 6.11 L14.25 6.33 L14.25 8.07 L13.00 8.29 L12.77 9.15 L13.74 9.97 L12.87 11.48 L11.68 11.04 L11.04 11.68 L11.48 12.87 L9.97 13.74 L9.15 12.77 L8.29 13.00 L8.07 14.25 L6.33 14.25 L6.11 13.00 L5.25 12.77 L4.43 13.74 L2.92 12.87 L3.36 11.68 L2.72 11.04 L1.53 11.48 L0.66 9.97 L1.63 9.15 L1.40 8.29 L0.15 8.07 L0.15 6.33 L1.40 6.11 L1.63 5.25 L0.66 4.43 L1.53 2.92 L2.72 3.36 L3.36 2.72 L2.92 1.53 L4.43 0.66 L5.25 1.63 L6.11 1.40 L6.33 0.15 L8.07 0.15 L8.29 1.40 L9.15 1.63 L9.97 0.66 L11.48 1.53 L11.04 2.72 L11.68 3.36 L12.87 2.92 L13.74 4.43 L12.77 5.25 Z M9.50 7.20 A2.30 2.30 0 1 0 4.90 7.20 A2.30 2.30 0 1 0 9.50 7.20 Z" fill="#8db3d3" fill-opacity="1" fill-rule="evenodd" stroke="#4e7ba6" stroke-width="0.55" stroke-opacity="0.85"/><circle cx="7.2" cy="7.2" r="3.60" fill="none" stroke="url(#gg)" stroke-width="2.60"/><circle cx="7.2" cy="7.2" r="2.30" fill="none" stroke="#44596e" stroke-width="0.6" stroke-opacity="0.85"/><path d="M14.69 12.65 L15.96 13.02 L15.67 13.97 L14.41 13.56 L14.11 13.96 L14.84 15.06 L14.01 15.60 L13.30 14.48 L12.82 14.59 L12.67 15.90 L11.69 15.77 L11.87 14.47 L11.43 14.24 L10.47 15.15 L9.79 14.42 L10.77 13.54 L10.58 13.08 L9.26 13.16 L9.22 12.17 L10.53 12.12 L10.68 11.65 L9.62 10.86 L10.22 10.07 L11.26 10.88 L11.68 10.61 L11.37 9.33 L12.34 9.11 L12.61 10.40 L13.11 10.46 L13.70 9.28 L14.58 9.74 L13.96 10.90 L14.30 11.27 L15.51 10.74 L15.89 11.65 L14.67 12.15 Z M13.60 12.50 A1.00 1.00 0 1 0 11.60 12.50 A1.00 1.00 0 1 0 13.60 12.50 Z" fill="#8db3d3" fill-opacity="1" fill-rule="evenodd" stroke="#4e7ba6" stroke-width="0.45" stroke-opacity="0.85"/><circle cx="12.6" cy="12.5" r="1.65" fill="none" stroke="#a7c8e0" stroke-width="1.30"/></svg><svg class="ico" style="left:371.8px;top:418.7px" width="16" height="16" viewBox="0 0 16 16"><path d="M13.00 6.11 L14.25 6.33 L14.25 8.07 L13.00 8.29 L12.77 9.15 L13.74 9.97 L12.87 11.48 L11.68 11.04 L11.04 11.68 L11.48 12.87 L9.97 13.74 L9.15 12.77 L8.29 13.00 L8.07 14.25 L6.33 14.25 L6.11 13.00 L5.25 12.77 L4.43 13.74 L2.92 12.87 L3.36 11.68 L2.72 11.04 L1.53 11.48 L0.66 9.97 L1.63 9.15 L1.40 8.29 L0.15 8.07 L0.15 6.33 L1.40 6.11 L1.63 5.25 L0.66 4.43 L1.53 2.92 L2.72 3.36 L3.36 2.72 L2.92 1.53 L4.43 0.66 L5.25 1.63 L6.11 1.40 L6.33 0.15 L8.07 0.15 L8.29 1.40 L9.15 1.63 L9.97 0.66 L11.48 1.53 L11.04 2.72 L11.68 3.36 L12.87 2.92 L13.74 4.43 L12.77 5.25 Z M9.50 7.20 A2.30 2.30 0 1 0 4.90 7.20 A2.30 2.30 0 1 0 9.50 7.20 Z" fill="#8db3d3" fill-opacity="1" fill-rule="evenodd" stroke="#4e7ba6" stroke-width="0.55" stroke-opacity="0.85"/><circle cx="7.2" cy="7.2" r="3.60" fill="none" stroke="url(#gg)" stroke-width="2.60"/><circle cx="7.2" cy="7.2" r="2.30" fill="none" stroke="#44596e" stroke-width="0.6" stroke-opacity="0.85"/><path d="M14.69 12.65 L15.96 13.02 L15.67 13.97 L14.41 13.56 L14.11 13.96 L14.84 15.06 L14.01 15.60 L13.30 14.48 L12.82 14.59 L12.67 15.90 L11.69 15.77 L11.87 14.47 L11.43 14.24 L10.47 15.15 L9.79 14.42 L10.77 13.54 L10.58 13.08 L9.26 13.16 L9.22 12.17 L10.53 12.12 L10.68 11.65 L9.62 10.86 L10.22 10.07 L11.26 10.88 L11.68 10.61 L11.37 9.33 L12.34 9.11 L12.61 10.40 L13.11 10.46 L13.70 9.28 L14.58 9.74 L13.96 10.90 L14.30 11.27 L15.51 10.74 L15.89 11.65 L14.67 12.15 Z M13.60 12.50 A1.00 1.00 0 1 0 11.60 12.50 A1.00 1.00 0 1 0 13.60 12.50 Z" fill="#8db3d3" fill-opacity="1" fill-rule="evenodd" stroke="#4e7ba6" stroke-width="0.45" stroke-opacity="0.85"/><circle cx="12.6" cy="12.5" r="1.65" fill="none" stroke="#a7c8e0" stroke-width="1.30"/></svg><svg class="ico" style="left:371.8px;top:437.7px" width="16" height="16" viewBox="0 0 16 16"><path d="M13.00 6.11 L14.25 6.33 L14.25 8.07 L13.00 8.29 L12.77 9.15 L13.74 9.97 L12.87 11.48 L11.68 11.04 L11.04 11.68 L11.48 12.87 L9.97 13.74 L9.15 12.77 L8.29 13.00 L8.07 14.25 L6.33 14.25 L6.11 13.00 L5.25 12.77 L4.43 13.74 L2.92 12.87 L3.36 11.68 L2.72 11.04 L1.53 11.48 L0.66 9.97 L1.63 9.15 L1.40 8.29 L0.15 8.07 L0.15 6.33 L1.40 6.11 L1.63 5.25 L0.66 4.43 L1.53 2.92 L2.72 3.36 L3.36 2.72 L2.92 1.53 L4.43 0.66 L5.25 1.63 L6.11 1.40 L6.33 0.15 L8.07 0.15 L8.29 1.40 L9.15 1.63 L9.97 0.66 L11.48 1.53 L11.04 2.72 L11.68 3.36 L12.87 2.92 L13.74 4.43 L12.77 5.25 Z M9.50 7.20 A2.30 2.30 0 1 0 4.90 7.20 A2.30 2.30 0 1 0 9.50 7.20 Z" fill="#8db3d3" fill-opacity="1" fill-rule="evenodd" stroke="#4e7ba6" stroke-width="0.55" stroke-opacity="0.85"/><circle cx="7.2" cy="7.2" r="3.60" fill="none" stroke="url(#gg)" stroke-width="2.60"/><circle cx="7.2" cy="7.2" r="2.30" fill="none" stroke="#44596e" stroke-width="0.6" stroke-opacity="0.85"/><path d="M14.69 12.65 L15.96 13.02 L15.67 13.97 L14.41 13.56 L14.11 13.96 L14.84 15.06 L14.01 15.60 L13.30 14.48 L12.82 14.59 L12.67 15.90 L11.69 15.77 L11.87 14.47 L11.43 14.24 L10.47 15.15 L9.79 14.42 L10.77 13.54 L10.58 13.08 L9.26 13.16 L9.22 12.17 L10.53 12.12 L10.68 11.65 L9.62 10.86 L10.22 10.07 L11.26 10.88 L11.68 10.61 L11.37 9.33 L12.34 9.11 L12.61 10.40 L13.11 10.46 L13.70 9.28 L14.58 9.74 L13.96 10.90 L14.30 11.27 L15.51 10.74 L15.89 11.65 L14.67 12.15 Z M13.60 12.50 A1.00 1.00 0 1 0 11.60 12.50 A1.00 1.00 0 1 0 13.60 12.50 Z" fill="#8db3d3" fill-opacity="1" fill-rule="evenodd" stroke="#4e7ba6" stroke-width="0.45" stroke-opacity="0.85"/><circle cx="12.6" cy="12.5" r="1.65" fill="none" stroke="#a7c8e0" stroke-width="1.30"/></svg><svg class="ico" style="left:371.8px;top:456.7px" width="16" height="16" viewBox="0 0 16 16"><path d="M13.00 6.11 L14.25 6.33 L14.25 8.07 L13.00 8.29 L12.77 9.15 L13.74 9.97 L12.87 11.48 L11.68 11.04 L11.04 11.68 L11.48 12.87 L9.97 13.74 L9.15 12.77 L8.29 13.00 L8.07 14.25 L6.33 14.25 L6.11 13.00 L5.25 12.77 L4.43 13.74 L2.92 12.87 L3.36 11.68 L2.72 11.04 L1.53 11.48 L0.66 9.97 L1.63 9.15 L1.40 8.29 L0.15 8.07 L0.15 6.33 L1.40 6.11 L1.63 5.25 L0.66 4.43 L1.53 2.92 L2.72 3.36 L3.36 2.72 L2.92 1.53 L4.43 0.66 L5.25 1.63 L6.11 1.40 L6.33 0.15 L8.07 0.15 L8.29 1.40 L9.15 1.63 L9.97 0.66 L11.48 1.53 L11.04 2.72 L11.68 3.36 L12.87 2.92 L13.74 4.43 L12.77 5.25 Z M9.50 7.20 A2.30 2.30 0 1 0 4.90 7.20 A2.30 2.30 0 1 0 9.50 7.20 Z" fill="#8db3d3" fill-opacity="1" fill-rule="evenodd" stroke="#4e7ba6" stroke-width="0.55" stroke-opacity="0.85"/><circle cx="7.2" cy="7.2" r="3.60" fill="none" stroke="url(#gg)" stroke-width="2.60"/><circle cx="7.2" cy="7.2" r="2.30" fill="none" stroke="#44596e" stroke-width="0.6" stroke-opacity="0.85"/><path d="M14.69 12.65 L15.96 13.02 L15.67 13.97 L14.41 13.56 L14.11 13.96 L14.84 15.06 L14.01 15.60 L13.30 14.48 L12.82 14.59 L12.67 15.90 L11.69 15.77 L11.87 14.47 L11.43 14.24 L10.47 15.15 L9.79 14.42 L10.77 13.54 L10.58 13.08 L9.26 13.16 L9.22 12.17 L10.53 12.12 L10.68 11.65 L9.62 10.86 L10.22 10.07 L11.26 10.88 L11.68 10.61 L11.37 9.33 L12.34 9.11 L12.61 10.40 L13.11 10.46 L13.70 9.28 L14.58 9.74 L13.96 10.90 L14.30 11.27 L15.51 10.74 L15.89 11.65 L14.67 12.15 Z M13.60 12.50 A1.00 1.00 0 1 0 11.60 12.50 A1.00 1.00 0 1 0 13.60 12.50 Z" fill="#8db3d3" fill-opacity="1" fill-rule="evenodd" stroke="#4e7ba6" stroke-width="0.45" stroke-opacity="0.85"/><circle cx="12.6" cy="12.5" r="1.65" fill="none" stroke="#a7c8e0" stroke-width="1.30"/></svg><svg class="ico" style="left:371.8px;top:475.7px" width="16" height="16" viewBox="0 0 16 16"><path d="M13.00 6.11 L14.25 6.33 L14.25 8.07 L13.00 8.29 L12.77 9.15 L13.74 9.97 L12.87 11.48 L11.68 11.04 L11.04 11.68 L11.48 12.87 L9.97 13.74 L9.15 12.77 L8.29 13.00 L8.07 14.25 L6.33 14.25 L6.11 13.00 L5.25 12.77 L4.43 13.74 L2.92 12.87 L3.36 11.68 L2.72 11.04 L1.53 11.48 L0.66 9.97 L1.63 9.15 L1.40 8.29 L0.15 8.07 L0.15 6.33 L1.40 6.11 L1.63 5.25 L0.66 4.43 L1.53 2.92 L2.72 3.36 L3.36 2.72 L2.92 1.53 L4.43 0.66 L5.25 1.63 L6.11 1.40 L6.33 0.15 L8.07 0.15 L8.29 1.40 L9.15 1.63 L9.97 0.66 L11.48 1.53 L11.04 2.72 L11.68 3.36 L12.87 2.92 L13.74 4.43 L12.77 5.25 Z M9.50 7.20 A2.30 2.30 0 1 0 4.90 7.20 A2.30 2.30 0 1 0 9.50 7.20 Z" fill="#8db3d3" fill-opacity="1" fill-rule="evenodd" stroke="#4e7ba6" stroke-width="0.55" stroke-opacity="0.85"/><circle cx="7.2" cy="7.2" r="3.60" fill="none" stroke="url(#gg)" stroke-width="2.60"/><circle cx="7.2" cy="7.2" r="2.30" fill="none" stroke="#44596e" stroke-width="0.6" stroke-opacity="0.85"/><path d="M14.69 12.65 L15.96 13.02 L15.67 13.97 L14.41 13.56 L14.11 13.96 L14.84 15.06 L14.01 15.60 L13.30 14.48 L12.82 14.59 L12.67 15.90 L11.69 15.77 L11.87 14.47 L11.43 14.24 L10.47 15.15 L9.79 14.42 L10.77 13.54 L10.58 13.08 L9.26 13.16 L9.22 12.17 L10.53 12.12 L10.68 11.65 L9.62 10.86 L10.22 10.07 L11.26 10.88 L11.68 10.61 L11.37 9.33 L12.34 9.11 L12.61 10.40 L13.11 10.46 L13.70 9.28 L14.58 9.74 L13.96 10.90 L14.30 11.27 L15.51 10.74 L15.89 11.65 L14.67 12.15 Z M13.60 12.50 A1.00 1.00 0 1 0 11.60 12.50 A1.00 1.00 0 1 0 13.60 12.50 Z" fill="#8db3d3" fill-opacity="1" fill-rule="evenodd" stroke="#4e7ba6" stroke-width="0.45" stroke-opacity="0.85"/><circle cx="12.6" cy="12.5" r="1.65" fill="none" stroke="#a7c8e0" stroke-width="1.30"/></svg><svg class="ico" style="left:371.8px;top:494.7px" width="16" height="16" viewBox="0 0 16 16"><path d="M13.00 6.11 L14.25 6.33 L14.25 8.07 L13.00 8.29 L12.77 9.15 L13.74 9.97 L12.87 11.48 L11.68 11.04 L11.04 11.68 L11.48 12.87 L9.97 13.74 L9.15 12.77 L8.29 13.00 L8.07 14.25 L6.33 14.25 L6.11 13.00 L5.25 12.77 L4.43 13.74 L2.92 12.87 L3.36 11.68 L2.72 11.04 L1.53 11.48 L0.66 9.97 L1.63 9.15 L1.40 8.29 L0.15 8.07 L0.15 6.33 L1.40 6.11 L1.63 5.25 L0.66 4.43 L1.53 2.92 L2.72 3.36 L3.36 2.72 L2.92 1.53 L4.43 0.66 L5.25 1.63 L6.11 1.40 L6.33 0.15 L8.07 0.15 L8.29 1.40 L9.15 1.63 L9.97 0.66 L11.48 1.53 L11.04 2.72 L11.68 3.36 L12.87 2.92 L13.74 4.43 L12.77 5.25 Z M9.50 7.20 A2.30 2.30 0 1 0 4.90 7.20 A2.30 2.30 0 1 0 9.50 7.20 Z" fill="#8db3d3" fill-opacity="1" fill-rule="evenodd" stroke="#4e7ba6" stroke-width="0.55" stroke-opacity="0.85"/><circle cx="7.2" cy="7.2" r="3.60" fill="none" stroke="url(#gg)" stroke-width="2.60"/><circle cx="7.2" cy="7.2" r="2.30" fill="none" stroke="#44596e" stroke-width="0.6" stroke-opacity="0.85"/><path d="M14.69 12.65 L15.96 13.02 L15.67 13.97 L14.41 13.56 L14.11 13.96 L14.84 15.06 L14.01 15.60 L13.30 14.48 L12.82 14.59 L12.67 15.90 L11.69 15.77 L11.87 14.47 L11.43 14.24 L10.47 15.15 L9.79 14.42 L10.77 13.54 L10.58 13.08 L9.26 13.16 L9.22 12.17 L10.53 12.12 L10.68 11.65 L9.62 10.86 L10.22 10.07 L11.26 10.88 L11.68 10.61 L11.37 9.33 L12.34 9.11 L12.61 10.40 L13.11 10.46 L13.70 9.28 L14.58 9.74 L13.96 10.90 L14.30 11.27 L15.51 10.74 L15.89 11.65 L14.67 12.15 Z M13.60 12.50 A1.00 1.00 0 1 0 11.60 12.50 A1.00 1.00 0 1 0 13.60 12.50 Z" fill="#8db3d3" fill-opacity="1" fill-rule="evenodd" stroke="#4e7ba6" stroke-width="0.45" stroke-opacity="0.85"/><circle cx="12.6" cy="12.5" r="1.65" fill="none" stroke="#a7c8e0" stroke-width="1.30"/></svg><svg class="ico" style="left:371.8px;top:513.7px" width="16" height="16" viewBox="0 0 16 16"><path d="M13.00 6.11 L14.25 6.33 L14.25 8.07 L13.00 8.29 L12.77 9.15 L13.74 9.97 L12.87 11.48 L11.68 11.04 L11.04 11.68 L11.48 12.87 L9.97 13.74 L9.15 12.77 L8.29 13.00 L8.07 14.25 L6.33 14.25 L6.11 13.00 L5.25 12.77 L4.43 13.74 L2.92 12.87 L3.36 11.68 L2.72 11.04 L1.53 11.48 L0.66 9.97 L1.63 9.15 L1.40 8.29 L0.15 8.07 L0.15 6.33 L1.40 6.11 L1.63 5.25 L0.66 4.43 L1.53 2.92 L2.72 3.36 L3.36 2.72 L2.92 1.53 L4.43 0.66 L5.25 1.63 L6.11 1.40 L6.33 0.15 L8.07 0.15 L8.29 1.40 L9.15 1.63 L9.97 0.66 L11.48 1.53 L11.04 2.72 L11.68 3.36 L12.87 2.92 L13.74 4.43 L12.77 5.25 Z M9.50 7.20 A2.30 2.30 0 1 0 4.90 7.20 A2.30 2.30 0 1 0 9.50 7.20 Z" fill="#8db3d3" fill-opacity="1" fill-rule="evenodd" stroke="#4e7ba6" stroke-width="0.55" stroke-opacity="0.85"/><circle cx="7.2" cy="7.2" r="3.60" fill="none" stroke="url(#gg)" stroke-width="2.60"/><circle cx="7.2" cy="7.2" r="2.30" fill="none" stroke="#44596e" stroke-width="0.6" stroke-opacity="0.85"/><path d="M14.69 12.65 L15.96 13.02 L15.67 13.97 L14.41 13.56 L14.11 13.96 L14.84 15.06 L14.01 15.60 L13.30 14.48 L12.82 14.59 L12.67 15.90 L11.69 15.77 L11.87 14.47 L11.43 14.24 L10.47 15.15 L9.79 14.42 L10.77 13.54 L10.58 13.08 L9.26 13.16 L9.22 12.17 L10.53 12.12 L10.68 11.65 L9.62 10.86 L10.22 10.07 L11.26 10.88 L11.68 10.61 L11.37 9.33 L12.34 9.11 L12.61 10.40 L13.11 10.46 L13.70 9.28 L14.58 9.74 L13.96 10.90 L14.30 11.27 L15.51 10.74 L15.89 11.65 L14.67 12.15 Z M13.60 12.50 A1.00 1.00 0 1 0 11.60 12.50 A1.00 1.00 0 1 0 13.60 12.50 Z" fill="#8db3d3" fill-opacity="1" fill-rule="evenodd" stroke="#4e7ba6" stroke-width="0.45" stroke-opacity="0.85"/><circle cx="12.6" cy="12.5" r="1.65" fill="none" stroke="#a7c8e0" stroke-width="1.30"/></svg><svg class="ico" style="left:371.8px;top:532.7px" width="16" height="16" viewBox="0 0 16 16"><path d="M13.00 6.11 L14.25 6.33 L14.25 8.07 L13.00 8.29 L12.77 9.15 L13.74 9.97 L12.87 11.48 L11.68 11.04 L11.04 11.68 L11.48 12.87 L9.97 13.74 L9.15 12.77 L8.29 13.00 L8.07 14.25 L6.33 14.25 L6.11 13.00 L5.25 12.77 L4.43 13.74 L2.92 12.87 L3.36 11.68 L2.72 11.04 L1.53 11.48 L0.66 9.97 L1.63 9.15 L1.40 8.29 L0.15 8.07 L0.15 6.33 L1.40 6.11 L1.63 5.25 L0.66 4.43 L1.53 2.92 L2.72 3.36 L3.36 2.72 L2.92 1.53 L4.43 0.66 L5.25 1.63 L6.11 1.40 L6.33 0.15 L8.07 0.15 L8.29 1.40 L9.15 1.63 L9.97 0.66 L11.48 1.53 L11.04 2.72 L11.68 3.36 L12.87 2.92 L13.74 4.43 L12.77 5.25 Z M9.50 7.20 A2.30 2.30 0 1 0 4.90 7.20 A2.30 2.30 0 1 0 9.50 7.20 Z" fill="#8db3d3" fill-opacity="1" fill-rule="evenodd" stroke="#4e7ba6" stroke-width="0.55" stroke-opacity="0.85"/><circle cx="7.2" cy="7.2" r="3.60" fill="none" stroke="url(#gg)" stroke-width="2.60"/><circle cx="7.2" cy="7.2" r="2.30" fill="none" stroke="#44596e" stroke-width="0.6" stroke-opacity="0.85"/><path d="M14.69 12.65 L15.96 13.02 L15.67 13.97 L14.41 13.56 L14.11 13.96 L14.84 15.06 L14.01 15.60 L13.30 14.48 L12.82 14.59 L12.67 15.90 L11.69 15.77 L11.87 14.47 L11.43 14.24 L10.47 15.15 L9.79 14.42 L10.77 13.54 L10.58 13.08 L9.26 13.16 L9.22 12.17 L10.53 12.12 L10.68 11.65 L9.62 10.86 L10.22 10.07 L11.26 10.88 L11.68 10.61 L11.37 9.33 L12.34 9.11 L12.61 10.40 L13.11 10.46 L13.70 9.28 L14.58 9.74 L13.96 10.90 L14.30 11.27 L15.51 10.74 L15.89 11.65 L14.67 12.15 Z M13.60 12.50 A1.00 1.00 0 1 0 11.60 12.50 A1.00 1.00 0 1 0 13.60 12.50 Z" fill="#8db3d3" fill-opacity="1" fill-rule="evenodd" stroke="#4e7ba6" stroke-width="0.45" stroke-opacity="0.85"/><circle cx="12.6" cy="12.5" r="1.65" fill="none" stroke="#a7c8e0" stroke-width="1.30"/></svg><svg class="ico" style="left:18.5px;top:10.5px" width="16" height="16" viewBox="0 0 16 16"><path d="M12.13 6.34 L14.06 6.44 L14.06 7.96 L12.13 8.06 L11.90 8.92 L13.52 9.97 L12.76 11.28 L11.04 10.41 L10.41 11.04 L11.28 12.76 L9.97 13.52 L8.92 11.90 L8.06 12.13 L7.96 14.06 L6.44 14.06 L6.34 12.13 L5.48 11.90 L4.43 13.52 L3.12 12.76 L3.99 11.04 L3.36 10.41 L1.64 11.28 L0.88 9.97 L2.50 8.92 L2.27 8.06 L0.34 7.96 L0.34 6.44 L2.27 6.34 L2.50 5.48 L0.88 4.43 L1.64 3.12 L3.36 3.99 L3.99 3.36 L3.12 1.64 L4.43 0.88 L5.48 2.50 L6.34 2.27 L6.44 0.34 L7.96 0.34 L8.06 2.27 L8.92 2.50 L9.97 0.88 L11.28 1.64 L10.41 3.36 L11.04 3.99 L12.76 3.12 L13.52 4.43 L11.90 5.48 Z M10.10 7.20 A2.90 2.90 0 1 0 4.30 7.20 A2.90 2.90 0 1 0 10.10 7.20 Z" fill="#c3d8e8" fill-opacity="0.7" fill-rule="evenodd"/><circle cx="7.2" cy="7.2" r="4.10" fill="none" stroke="#d3e4f0" stroke-width="2.40"/><circle cx="7.2" cy="7.2" r="2.90" fill="none" stroke="#9db6cb" stroke-width="0.6" stroke-opacity="0.85"/><path d="M14.80 13.23 L15.77 13.54 L15.52 14.35 L14.54 14.06 L14.27 14.42 L14.81 15.28 L14.10 15.74 L13.54 14.89 L13.10 14.99 L12.96 16.00 L12.12 15.89 L12.24 14.88 L11.84 14.68 L11.08 15.36 L10.51 14.74 L11.25 14.04 L11.07 13.62 L10.06 13.66 L10.01 12.82 L11.03 12.76 L11.16 12.33 L10.36 11.70 L10.87 11.03 L11.69 11.64 L12.07 11.39 L11.85 10.40 L12.68 10.21 L12.91 11.20 L13.36 11.26 L13.83 10.35 L14.59 10.74 L14.13 11.65 L14.44 11.98 L15.38 11.60 L15.71 12.38 L14.77 12.78 Z M13.80 13.10 A0.90 0.90 0 1 0 12.00 13.10 A0.90 0.90 0 1 0 13.80 13.10 Z" fill="#c3d8e8" fill-opacity="0.7" fill-rule="evenodd"/><circle cx="12.9" cy="13.1" r="1.50" fill="none" stroke="#cadcea" stroke-width="1.20"/></svg><svg class="ico" style="left:15.6px;top:89.3px" width="16" height="16" viewBox="0 0 16 16"><path d="M12.03 6.36 L13.86 6.46 L13.86 7.94 L12.03 8.04 L11.80 8.88 L13.33 9.89 L12.60 11.17 L10.96 10.34 L10.34 10.96 L11.17 12.60 L9.89 13.33 L8.88 11.80 L8.04 12.03 L7.94 13.86 L6.46 13.86 L6.36 12.03 L5.52 11.80 L4.51 13.33 L3.23 12.60 L4.06 10.96 L3.44 10.34 L1.80 11.17 L1.07 9.89 L2.60 8.88 L2.37 8.04 L0.54 7.94 L0.54 6.46 L2.37 6.36 L2.60 5.52 L1.07 4.51 L1.80 3.23 L3.44 4.06 L4.06 3.44 L3.23 1.80 L4.51 1.07 L5.52 2.60 L6.36 2.37 L6.46 0.54 L7.94 0.54 L8.04 2.37 L8.88 2.60 L9.89 1.07 L11.17 1.80 L10.34 3.44 L10.96 4.06 L12.60 3.23 L13.33 4.51 L11.80 5.52 Z M10.20 7.20 A3.00 3.00 0 1 0 4.20 7.20 A3.00 3.00 0 1 0 10.20 7.20 Z" fill="#8fb6d6" fill-opacity="0.75" fill-rule="evenodd"/><circle cx="7.2" cy="7.2" r="4.10" fill="none" stroke="url(#gt)" stroke-width="2.20"/><circle cx="7.2" cy="7.2" r="3.00" fill="none" stroke="#6f8192" stroke-width="0.6" stroke-opacity="0.85"/><path d="M14.89 13.55 L16.06 13.90 L15.78 14.83 L14.61 14.46 L14.31 14.86 L14.97 15.88 L14.16 16.40 L13.50 15.38 L13.02 15.49 L12.87 16.70 L11.91 16.58 L12.07 15.37 L11.63 15.14 L10.73 15.97 L10.08 15.26 L10.97 14.44 L10.78 13.98 L9.56 14.04 L9.52 13.08 L10.73 13.02 L10.88 12.55 L9.91 11.81 L10.49 11.04 L11.46 11.78 L11.88 11.51 L11.61 10.32 L12.55 10.11 L12.81 11.30 L13.31 11.36 L13.86 10.28 L14.72 10.72 L14.16 11.80 L14.50 12.17 L15.62 11.69 L16.00 12.58 L14.87 13.05 Z M13.70 13.40 A0.90 0.90 0 1 0 11.90 13.40 A0.90 0.90 0 1 0 13.70 13.40 Z" fill="#8fb6d6" fill-opacity="0.75" fill-rule="evenodd"/><circle cx="12.8" cy="13.4" r="1.60" fill="none" stroke="#b4d3ea" stroke-width="1.40"/></svg><svg class="ico" style="left:147.1px;top:93.7px" width="16" height="16" viewBox="0 0 16 16"><path d="M11.34 6.48 L12.96 6.56 L12.96 7.84 L11.34 7.92 L11.14 8.64 L12.51 9.53 L11.87 10.63 L10.42 9.89 L9.89 10.42 L10.63 11.87 L9.53 12.51 L8.64 11.14 L7.92 11.34 L7.84 12.96 L6.56 12.96 L6.48 11.34 L5.76 11.14 L4.87 12.51 L3.77 11.87 L4.51 10.42 L3.98 9.89 L2.53 10.63 L1.89 9.53 L3.26 8.64 L3.06 7.92 L1.44 7.84 L1.44 6.56 L3.06 6.48 L3.26 5.76 L1.89 4.87 L2.53 3.77 L3.98 4.51 L4.51 3.98 L3.77 2.53 L4.87 1.89 L5.76 3.26 L6.48 3.06 L6.56 1.44 L7.84 1.44 L7.92 3.06 L8.64 3.26 L9.53 1.89 L10.63 2.53 L9.89 3.98 L10.42 4.51 L11.87 3.77 L12.51 4.87 L11.14 5.76 Z M9.90 7.20 A2.70 2.70 0 1 0 4.50 7.20 A2.70 2.70 0 1 0 9.90 7.20 Z" fill="#c4dbee" fill-opacity="0.55" fill-rule="evenodd"/><circle cx="7.2" cy="7.2" r="3.60" fill="none" stroke="#cfe5f4" stroke-width="1.80"/><circle cx="7.2" cy="7.2" r="2.70" fill="none" stroke="#a6bfd8" stroke-width="0.6" stroke-opacity="0.85"/><path d="M15.60 13.04 L16.56 13.36 L16.31 14.20 L15.33 13.91 L15.04 14.29 L15.58 15.16 L14.84 15.63 L14.27 14.78 L13.81 14.89 L13.66 15.90 L12.79 15.79 L12.90 14.77 L12.48 14.56 L11.72 15.24 L11.12 14.60 L11.86 13.89 L11.68 13.45 L10.66 13.48 L10.61 12.61 L11.63 12.54 L11.77 12.09 L10.97 11.46 L11.50 10.76 L12.32 11.36 L12.72 11.10 L12.51 10.10 L13.37 9.91 L13.61 10.90 L14.08 10.96 L14.57 10.06 L15.35 10.46 L14.90 11.38 L15.22 11.72 L16.17 11.35 L16.51 12.15 L15.57 12.57 Z M14.80 12.90 A1.20 1.20 0 1 0 12.40 12.90 A1.20 1.20 0 1 0 14.80 12.90 Z" fill="#c4dbee" fill-opacity="0.55" fill-rule="evenodd"/><circle cx="13.6" cy="12.9" r="1.70" fill="none" stroke="#bdd5ea" stroke-width="1.00"/></svg></div>
<div class="t" id="t0" style="left:389.40px;top:134.5px;letter-spacing:-0.229px;">User Access Logging Service</div>
<div class="t" id="t1" style="left:624.25px;top:134.5px;letter-spacing:-0.176px;">This service logs unique client access requests, ...</div>
<div class="t" id="t2" style="left:893.30px;top:134.5px;letter-spacing:0.167px;">Running</div>
<div class="t" id="t3" style="left:957.30px;top:134.5px;letter-spacing:0.089px;">Automatic (D...</div>
<div class="t" id="t4" style="left:1048.50px;top:134.5px;letter-spacing:-0.304px;">Local Syste...</div>
<div class="t" id="t5" style="left:389.40px;top:153.5px;letter-spacing:-0.410px;">User Data Access_ece157dd</div>
<div class="t" id="t6" style="left:623.50px;top:153.5px;letter-spacing:-0.150px;">Provides apps access to structured user data, in...</div>
<div class="t" id="t7" style="left:956.30px;top:153.5px;letter-spacing:0.400px;">Manual</div>
<div class="t" id="t8" style="left:1048.50px;top:153.5px;letter-spacing:-0.304px;">Local Syste...</div>
<div class="t" id="t9" style="left:389.40px;top:172.5px;letter-spacing:-0.394px;">User Data Storage_ece157dd</div>
<div class="t" id="t10" style="left:623.50px;top:172.5px;letter-spacing:-0.060px;">Handles storage of structured user data, includi...</div>
<div class="t" id="t11" style="left:956.30px;top:172.5px;letter-spacing:0.400px;">Manual</div>
<div class="t" id="t12" style="left:1048.50px;top:172.5px;letter-spacing:-0.304px;">Local Syste...</div>
<div class="t" id="t13" style="left:389.40px;top:191.5px;letter-spacing:-0.230px;">User Experience Virtualization Service</div>
<div class="t" id="t14" style="left:623.50px;top:191.5px;letter-spacing:-0.046px;">Provides support for application and OS setting...</div>
<div class="t" id="t15" style="left:956.30px;top:191.5px;letter-spacing:-0.071px;">Disabled</div>
<div class="t" id="t16" style="left:1048.50px;top:191.5px;letter-spacing:-0.304px;">Local Syste...</div>
<div class="t" id="t17" style="left:389.40px;top:210.5px;letter-spacing:-0.236px;">User Manager</div>
<div class="t" id="t18" style="left:623.50px;top:210.5px;letter-spacing:0.000px;">User Manager provides the runtime componen...</div>
<div class="t" id="t19" style="left:893.30px;top:210.5px;letter-spacing:0.167px;">Running</div>
<div class="t" id="t20" style="left:957.30px;top:210.5px;letter-spacing:0.196px;">Automatic (T...</div>
<div class="t" id="t21" style="left:1048.50px;top:210.5px;letter-spacing:-0.304px;">Local Syste...</div>
<div class="t" id="t22" style="left:389.40px;top:229.5px;letter-spacing:-0.266px;">User Profile Service</div>
<div class="t" id="t23" style="left:624.25px;top:229.5px;letter-spacing:-0.075px;">This service is responsible for loading and unlo...</div>
<div class="t" id="t24" style="left:893.30px;top:229.5px;letter-spacing:0.167px;">Running</div>
<div class="t" id="t25" style="left:957.30px;top:229.5px;letter-spacing:0.250px;">Automatic</div>
<div class="t" id="t26" style="left:1048.50px;top:229.5px;letter-spacing:-0.304px;">Local Syste...</div>
<div class="t" id="t27" style="left:390.40px;top:248.5px;letter-spacing:-0.346px;color:#fff;">VeeraConstructEnterpriseServer64.exe</div>
<div class="t" id="t28" style="left:623.50px;top:248.5px;letter-spacing:-0.117px;color:#fff;">Rapid Insight</div>
<div class="t" id="t29" style="left:694.35px;top:248.5px;color:#fff;font-size:10.5px;">®</div>
<div class="t" id="t30" style="left:707.20px;top:248.5px;letter-spacing:-1.013px;color:#fff;">Veera</div>
<div class="t" id="t31" style="left:734.55px;top:248.1px;color:#fff;font-size:9px;">™</div>
<div class="t" id="t32" style="left:746.80px;top:248.5px;letter-spacing:-0.440px;color:#fff;">Enterprise Server x64</div>
<div class="t" id="t33" style="left:893.30px;top:248.5px;letter-spacing:0.167px;color:#fff;">Running</div>
<div class="t" id="t34" style="left:957.30px;top:248.5px;letter-spacing:0.250px;color:#fff;">Automatic</div>
<div class="t" id="t35" style="left:1048.50px;top:248.5px;letter-spacing:-0.068px;color:#fff;">Network S...</div>
<div class="t" id="t36" style="left:390.40px;top:267.5px;letter-spacing:-0.227px;">Virtual Disk</div>
<div class="t" id="t37" style="left:730.75px;top:267.5px;letter-spacing:-0.091px;">nt services for disks, volu...</div>
<div class="t" id="t38" style="left:956.30px;top:267.5px;letter-spacing:0.400px;">Manual</div>
<div class="t" id="t39" style="left:1048.50px;top:267.5px;letter-spacing:-0.304px;">Local Syste...</div>
<div class="t" id="t40" style="left:390.40px;top:286.5px;letter-spacing:-0.172px;">VMware Alias Manager and Ticket Ser</div>
<div class="t" id="t41" style="left:734.70px;top:286.5px;letter-spacing:-0.245px;">cket Service</div>
<div class="t" id="t42" style="left:893.30px;top:286.5px;letter-spacing:0.167px;">Running</div>
<div class="t" id="t43" style="left:957.30px;top:286.5px;letter-spacing:0.250px;">Automatic</div>
<div class="t" id="t44" style="left:1048.50px;top:286.5px;letter-spacing:-0.304px;">Local Syste...</div>
<div class="t" id="t45" style="left:390.40px;top:305.5px;letter-spacing:-0.183px;">VMware Snapshot Provider</div>
<div class="t" id="t46" style="left:732.50px;top:305.5px;letter-spacing:0.120px;">ovider</div>
<div class="t" id="t47" style="left:956.30px;top:305.5px;letter-spacing:0.400px;">Manual</div>
<div class="t" id="t48" style="left:1048.50px;top:305.5px;letter-spacing:-0.304px;">Local Syste...</div>
<div class="t" id="t49" style="left:390.40px;top:324.5px;letter-spacing:-0.358px;">VMware SVGA Helper Service</div>
<div class="t" id="t50" style="left:735.00px;top:324.5px;letter-spacing:0.018px;">driver by collecting and c...</div>
<div class="t" id="t51" style="left:893.30px;top:324.5px;letter-spacing:0.167px;">Running</div>
<div class="t" id="t52" style="left:957.30px;top:324.5px;letter-spacing:0.250px;">Automatic</div>
<div class="t" id="t53" style="left:1048.50px;top:324.5px;letter-spacing:-0.304px;">Local Syste...</div>
<div class="t" id="t54" style="left:390.40px;top:343.5px;letter-spacing:-0.123px;">VMware Tools</div>
<div class="t" id="t55" style="left:734.75px;top:343.5px;letter-spacing:-0.037px;">synchronizing objects bet...</div>
<div class="t" id="t56" style="left:893.30px;top:343.5px;letter-spacing:0.167px;">Running</div>
<div class="t" id="t57" style="left:957.30px;top:343.5px;letter-spacing:0.250px;">Automatic</div>
<div class="t" id="t58" style="left:1048.50px;top:343.5px;letter-spacing:-0.304px;">Local Syste...</div>
<div class="t" id="t59" style="left:390.40px;top:362.5px;letter-spacing:-0.150px;">Volume Shadow Copy</div>
<div class="t" id="t60" style="left:730.75px;top:362.5px;letter-spacing:-0.092px;">nents Volume Shadow Co...</div>
<div class="t" id="t61" style="left:956.30px;top:362.5px;letter-spacing:0.400px;">Manual</div>
<div class="t" id="t62" style="left:1048.50px;top:362.5px;letter-spacing:-0.304px;">Local Syste...</div>
<div class="t" id="t63" style="left:390.40px;top:381.5px;letter-spacing:-0.246px;">WalletService</div>
<div class="t" id="t64" style="left:733.50px;top:381.5px;letter-spacing:-0.034px;">y clients of the wallet</div>
<div class="t" id="t65" style="left:956.30px;top:381.5px;letter-spacing:-0.071px;">Disabled</div>
<div class="t" id="t66" style="left:1048.50px;top:381.5px;letter-spacing:-0.304px;">Local Syste...</div>
<div class="t" id="t67" style="left:390.40px;top:400.5px;letter-spacing:-0.550px;">WarpJITSvc</div>
<div class="t" id="t68" style="left:734.25px;top:400.5px;letter-spacing:-0.315px;">process service for WARP ...</div>
<div class="t" id="t69" style="left:956.30px;top:400.5px;letter-spacing:0.057px;">Manual (Trig...</div>
<div class="t" id="t70" style="left:1048.50px;top:400.5px;letter-spacing:-0.250px;">Local Service</div>
<div class="t" id="t71" style="left:390.40px;top:419.5px;letter-spacing:0.031px;">Web Account Manager</div>
<div class="t" id="t72" style="left:733.50px;top:419.5px;letter-spacing:0.026px;">y Web Account Manager t...</div>
<div class="t" id="t73" style="left:893.30px;top:419.5px;letter-spacing:0.167px;">Running</div>
<div class="t" id="t74" style="left:956.30px;top:419.5px;letter-spacing:0.400px;">Manual</div>
<div class="t" id="t75" style="left:1048.50px;top:419.5px;letter-spacing:-0.304px;">Local Syste...</div>
<div class="t" id="t76" style="left:390.40px;top:438.5px;letter-spacing:0.142px;">Windows Audio</div>
<div class="t" id="t77" style="left:728.70px;top:438.5px;letter-spacing:-0.154px;">Windows-based programs. ...</div>
<div class="t" id="t78" style="left:956.30px;top:438.5px;letter-spacing:0.400px;">Manual</div>
<div class="t" id="t79" style="left:1048.50px;top:438.5px;letter-spacing:-0.250px;">Local Service</div>
<div class="t" id="t80" style="left:390.40px;top:457.5px;letter-spacing:0.045px;">Windows Audio Endpoint Builder</div>
<div class="t" id="t81" style="left:730.00px;top:457.5px;letter-spacing:-0.004px;">ces for the Windows Audio...</div>
<div class="t" id="t82" style="left:956.30px;top:457.5px;letter-spacing:0.400px;">Manual</div>
<div class="t" id="t83" style="left:1048.50px;top:457.5px;letter-spacing:-0.304px;">Local Syste...</div>
<div class="t" id="t84" style="left:390.40px;top:476.5px;letter-spacing:-0.085px;">Windows Biometric Service</div>
<div class="t" id="t85" style="left:624.25px;top:476.5px;letter-spacing:-0.059px;">The Windows biometric service gives client ap...</div>
<div class="t" id="t86" style="left:956.30px;top:476.5px;letter-spacing:0.057px;">Manual (Trig...</div>
<div class="t" id="t87" style="left:1048.50px;top:476.5px;letter-spacing:-0.304px;">Local Syste...</div>
<div class="t" id="t88" style="left:390.40px;top:495.5px;letter-spacing:-0.296px;">Windows Camera Frame Server</div>
<div class="t" id="t89" style="left:623.50px;top:495.5px;letter-spacing:-0.107px;">Enables multiple clients to access video frames ...</div>
<div class="t" id="t90" style="left:956.30px;top:495.5px;letter-spacing:0.057px;">Manual (Trig...</div>
<div class="t" id="t91" style="left:1048.50px;top:495.5px;letter-spacing:-0.250px;">Local Service</div>
<div class="t" id="t92" style="left:390.40px;top:514.5px;letter-spacing:0.012px;">Windows Connection Manager</div>
<div class="t" id="t93" style="left:623.50px;top:514.5px;letter-spacing:0.078px;">Makes automatic connect/disconnect decision...</div>
<div class="t" id="t94" style="left:893.30px;top:514.5px;letter-spacing:0.167px;">Running</div>
<div class="t" id="t95" style="left:957.30px;top:514.5px;letter-spacing:0.196px;">Automatic (T...</div>
<div class="t" id="t96" style="left:1048.50px;top:514.5px;letter-spacing:-0.250px;">Local Service</div>
<div class="t" id="t97" style="left:390.40px;top:533.5px;letter-spacing:-0.086px;">Windows Defender Advanced Threat Pro...</div>
<div class="t" id="t98" style="left:624.50px;top:533.5px;letter-spacing:-0.059px;">Windows Defender Advanced Threat Protectio...</div>
<div class="t" id="t99" style="left:956.30px;top:533.5px;letter-spacing:0.400px;">Manual</div>
<div class="t" id="t100" style="left:1048.50px;top:533.5px;letter-spacing:-0.304px;">Local Syste...</div>
<div class="t" id="t101" style="left:373.40px;top:115.6px;letter-spacing:0.350px;">Name</div>
<div class="t" id="t102" style="left:623.40px;top:115.6px;letter-spacing:0.085px;">Description</div>
<div class="t" id="t103" style="left:894.00px;top:115.6px;letter-spacing:-0.360px;">Status</div>
<div class="t" id="t104" style="left:956.70px;top:115.6px;letter-spacing:-0.109px;">Startup Type</div>
<div class="t" id="t105" style="left:1048.40px;top:115.6px;letter-spacing:-0.038px;">Log On As</div>
<div class="t" id="t106" style="left:39.90px;top:11.5px;letter-spacing:-0.479px;color:#fff;">Services</div>
<div class="t" id="t107" style="left:20.20px;top:37.6px;letter-spacing:0.000px;">File</div>
<div class="t" id="t108" style="left:55.30px;top:37.6px;letter-spacing:0.340px;">Action</div>
<div class="t" id="t109" style="left:106.10px;top:37.6px;letter-spacing:-0.383px;">View</div>
<div class="t" id="t110" style="left:146.50px;top:37.6px;letter-spacing:0.383px;">Help</div>
<div class="t" id="t111" style="left:36.50px;top:89.7px;letter-spacing:-0.310px;">Services (Local)</div>
<div class="t" id="t112" style="left:172.40px;top:93.7px;letter-spacing:-0.303px;">Services (Local)</div>
<div class="t" id="t113" style="left:143.60px;top:118.8px;letter-spacing:-0.076px;font-weight:bold;">VeeraConstructEnterpriseServer64.exe</div>
<div class="t" id="t114" style="left:142.80px;top:151.7px;letter-spacing:-0.160px;"><span class="lnk">Stop</span> the service</div>
<div class="t" id="t115" style="left:142.50px;top:166.8px;letter-spacing:-0.222px;"><span class="lnk">Restart</span> the service</div>
<div class="t" id="t116" style="left:142.30px;top:211.6px;letter-spacing:0.109px;">Description:</div>
<div class="t" id="t117" style="left:142.30px;top:226.6px;letter-spacing:-0.133px;">Rapid Insight</div>
<div class="t" id="t118" style="left:212.35px;top:226.6px;font-size:10.5px;">®</div>
<div class="t" id="t119" style="left:226.10px;top:226.6px;letter-spacing:-0.800px;">Veera</div>
<div class="t" id="t120" style="left:253.95px;top:226.2px;font-size:9px;">™</div>
<div class="t" id="t121" style="left:266.60px;top:226.6px;letter-spacing:-0.362px;">Enterprise Server</div>
<div class="t" id="t122" style="left:143.05px;top:241.6px;letter-spacing:-1.075px;">x64</div>
<div class="t" id="t123" style="left:147.60px;top:555.6px;letter-spacing:-0.300px;">Extended</div>
<div class="t" id="t124" style="left:211.60px;top:555.6px;letter-spacing:-0.207px;">Standard</div>
<div class="t" id="t125" style="left:12.70px;top:577.6px;letter-spacing:-0.239px;">Stop service VeeraConstructEnterpriseServer64.exe on Local Computer</div>
<div id="ctx" style="left:586px;top:260px;width:149px;height:220px;background:#f0f0f0;border:1px solid #a0a0a0"></div>
<div style="left:617px;top:263px;width:1px;height:214px;background:#d7d7d7"></div>
<div style="left:618px;top:263px;width:1px;height:214px;background:#fff"></div>
<div style="left:589px;top:285px;width:143px;height:22px;background:#d6e8f9;border:1px solid #3c98e4"></div>
<div class="msep" style="top:374px"></div>
<div class="msep" style="top:400px"></div>
<div class="msep" style="top:426px"></div>
<div class="msep" style="top:452px"></div>
<svg style="left:718px;top:383px" width="6" height="9" viewBox="0 0 6 9"><path d="M0.9 1.1L4.4 4.5 0.9 7.9" fill="none" stroke="#3a3a3a" stroke-width="1.05"/></svg>

<div class="t" id="t126" style="left:621.80px;top:265.7px;letter-spacing:-0.312px;color:#7a7a7a;">Start</div>
<div class="t" id="t127" style="left:621.80px;top:287.7px;letter-spacing:-0.250px;">Stop</div>
<div class="t" id="t128" style="left:621.30px;top:309.6px;letter-spacing:-0.500px;color:#7a7a7a;">Pause</div>
<div class="t" id="t129" style="left:621.30px;top:331.7px;letter-spacing:-0.270px;color:#7a7a7a;">Resume</div>
<div class="t" id="t130" style="left:621.30px;top:353.5px;letter-spacing:-0.400px;">Restart</div>
<div class="t" id="t131" style="left:622.30px;top:379.5px;letter-spacing:-0.300px;">All Tasks</div>
<div class="t" id="t132" style="left:621.30px;top:405.5px;letter-spacing:-0.300px;">Refresh</div>
<div class="t" id="t133" style="left:621.55px;top:431.6px;letter-spacing:-0.039px;font-weight:bold;">Properties</div>
<div class="t" id="t134" style="left:621.30px;top:457.5px;letter-spacing:0.233px;">Help</div>

</body></html>
